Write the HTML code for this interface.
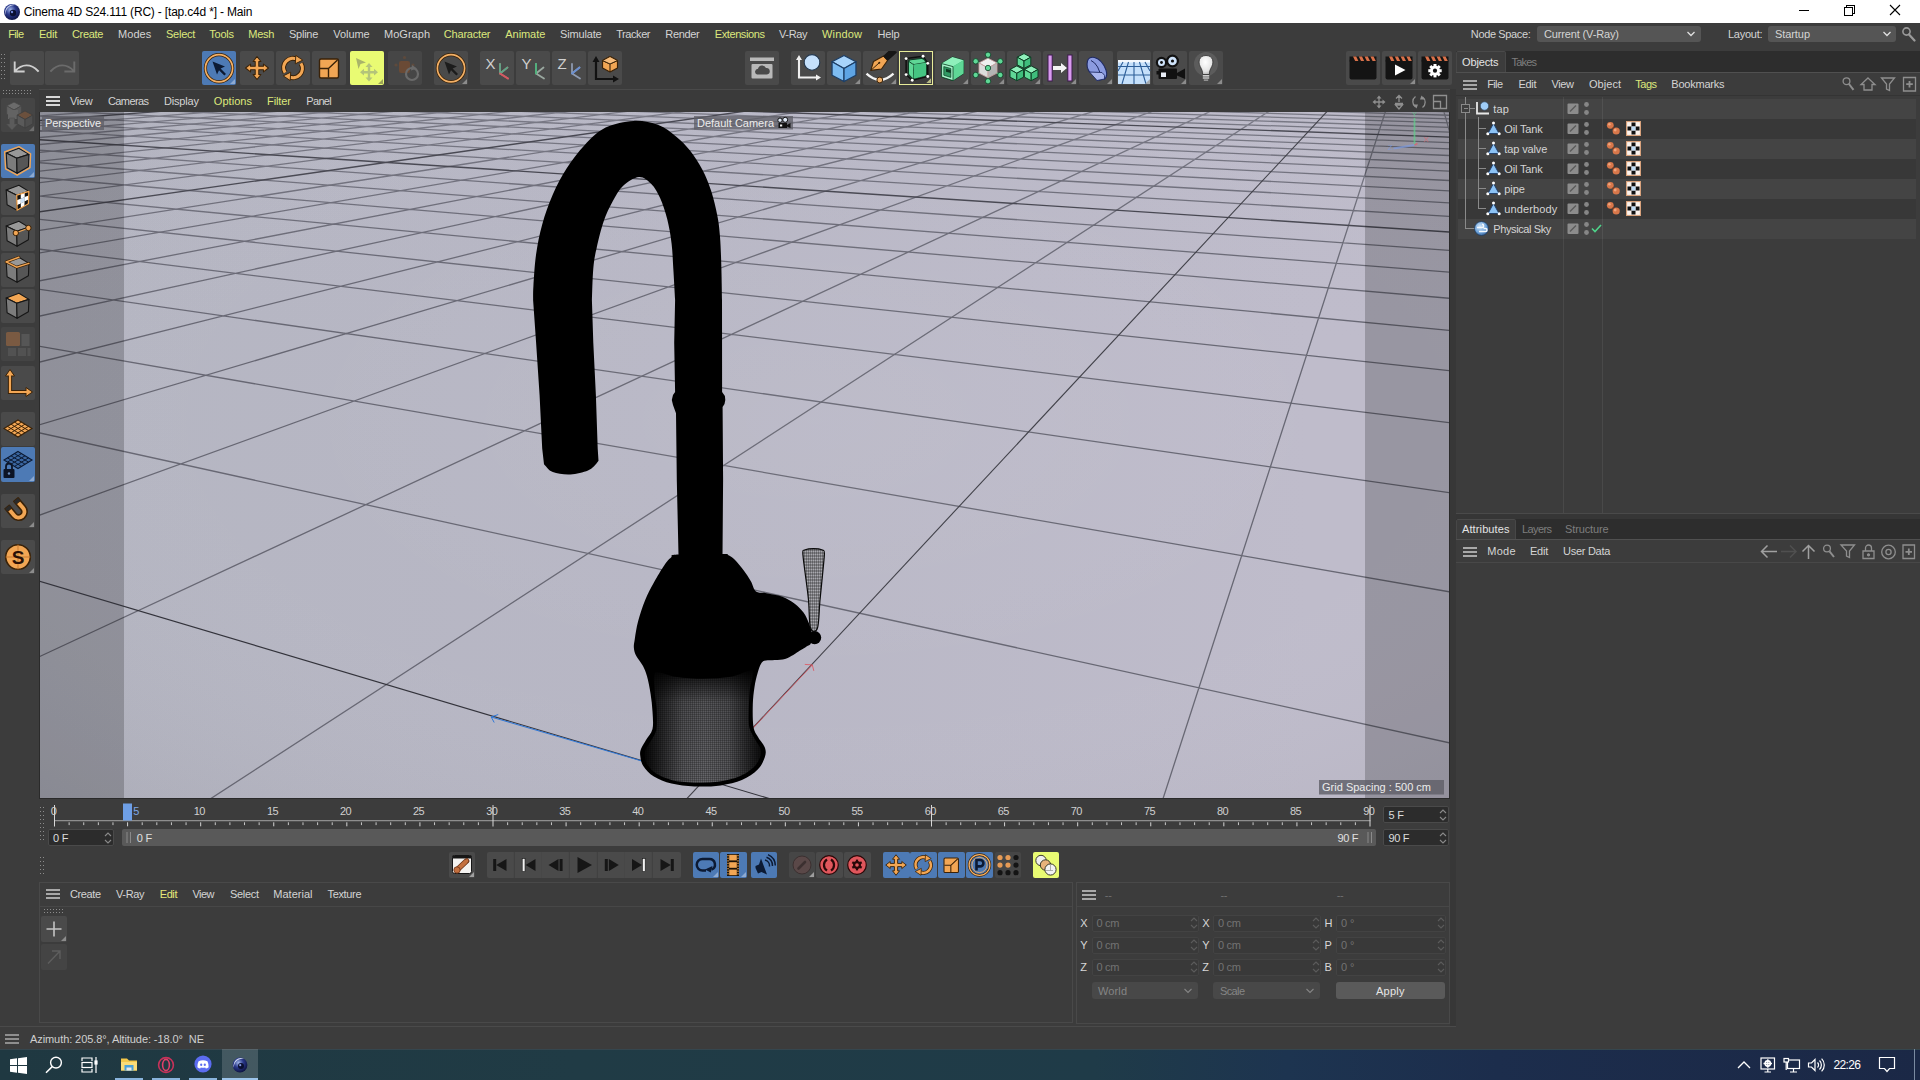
<!DOCTYPE html>
<html><head><meta charset="utf-8"><title>Cinema 4D</title>
<style>
html,body{margin:0;padding:0;}
body{width:1920px;height:1080px;overflow:hidden;background:#3c3c3c;position:relative;font-family:"Liberation Sans",sans-serif;}
div,span,svg{position:absolute;box-sizing:border-box;}
span{white-space:pre;}
svg text{font-family:"Liberation Sans",sans-serif;}
</style></head><body>
<div style="left:0px;top:0px;width:1920px;height:23px;background:#ffffff;"></div>
<svg style="left:3px;top:3px;" width="18" height="18"><defs><radialGradient id="c4dg" cx="0.4" cy="0.35" r="0.7"><stop offset="0" stop-color="#9fb4e8"/><stop offset="0.45" stop-color="#2b3a8c"/><stop offset="1" stop-color="#0a0f3a"/></radialGradient></defs>
<circle cx="9" cy="9" r="8" fill="url(#c4dg)"/><path d="M2.5 12 A8 8 0 0 1 13 2.2 A9 9 0 0 0 2.5 12Z" fill="#dfe6fa" opacity="0.85"/><circle cx="10" cy="10" r="3.2" fill="#0b1030"/><circle cx="9" cy="9" r="1.2" fill="#6f86d8"/></svg>
<span style="left:23.70px;top:3.64px;font-size:12px;line-height:16px;color:#000000;letter-spacing:-0.179px;">Cinema 4D S24.111 (RC) - [tap.c4d *] - Main</span>
<svg style="left:1795px;top:0px;" width="120" height="23"><g stroke="#000" stroke-width="1" fill="none" shape-rendering="crispEdges">
<path d="M4 10.5 H14"/>
<path d="M49.5 7.5 h8 v8 h-8 z"/><path d="M51.5 7.5 v-2 h8 v8 h-2"/>
</g><g stroke="#000" stroke-width="1.1" fill="none"><path d="M95 5 L105 15 M105 5 L95 15"/></g></svg>
<div style="left:0px;top:23px;width:1920px;height:23px;background:#3c3c3c;"></div>
<span style="left:8.30px;top:27.19px;font-size:11px;line-height:14px;color:#dde87c;letter-spacing:-0.675px;">File</span>
<span style="left:39.00px;top:27.19px;font-size:11px;line-height:14px;color:#dde87c;letter-spacing:-0.218px;">Edit</span>
<span style="left:72.00px;top:27.19px;font-size:11px;line-height:14px;color:#dde87c;letter-spacing:-0.343px;">Create</span>
<span style="left:118.00px;top:27.19px;font-size:11px;line-height:14px;color:#d4d4d4;letter-spacing:0.071px;">Modes</span>
<span style="left:166.00px;top:27.19px;font-size:11px;line-height:14px;color:#dde87c;letter-spacing:-0.254px;">Select</span>
<span style="left:209.30px;top:27.19px;font-size:11px;line-height:14px;color:#dde87c;letter-spacing:-0.245px;">Tools</span>
<span style="left:248.30px;top:27.19px;font-size:11px;line-height:14px;color:#dde87c;letter-spacing:-0.300px;">Mesh</span>
<span style="left:289.00px;top:27.19px;font-size:11px;line-height:14px;color:#d4d4d4;letter-spacing:-0.256px;">Spline</span>
<span style="left:333.30px;top:27.19px;font-size:11px;line-height:14px;color:#d4d4d4;letter-spacing:-0.058px;">Volume</span>
<span style="left:384.00px;top:27.19px;font-size:11px;line-height:14px;color:#d4d4d4;letter-spacing:0.024px;">MoGraph</span>
<span style="left:443.80px;top:27.19px;font-size:11px;line-height:14px;color:#dde87c;letter-spacing:-0.200px;">Character</span>
<span style="left:505.30px;top:27.19px;font-size:11px;line-height:14px;color:#dde87c;letter-spacing:-0.059px;">Animate</span>
<span style="left:560.00px;top:27.19px;font-size:11px;line-height:14px;color:#d4d4d4;letter-spacing:-0.157px;">Simulate</span>
<span style="left:616.20px;top:27.19px;font-size:11px;line-height:14px;color:#d4d4d4;letter-spacing:-0.429px;">Tracker</span>
<span style="left:665.30px;top:27.19px;font-size:11px;line-height:14px;color:#d4d4d4;letter-spacing:-0.336px;">Render</span>
<span style="left:714.70px;top:27.19px;font-size:11px;line-height:14px;color:#dde87c;letter-spacing:-0.390px;">Extensions</span>
<span style="left:779.00px;top:27.19px;font-size:11px;line-height:14px;color:#d4d4d4;letter-spacing:-0.364px;">V-Ray</span>
<span style="left:822.00px;top:27.19px;font-size:11px;line-height:14px;color:#dde87c;letter-spacing:0.175px;">Window</span>
<span style="left:877.50px;top:27.19px;font-size:11px;line-height:14px;color:#d4d4d4;letter-spacing:-0.208px;">Help</span>
<span style="left:1470.80px;top:27.19px;font-size:11px;line-height:14px;color:#d4d4d4;letter-spacing:-0.360px;">Node Space:</span>
<div style="left:1537px;top:26px;width:164px;height:16px;background:#555555;border-radius:3px;"></div>
<span style="left:1544.00px;top:27.19px;font-size:11px;line-height:14px;color:#d4d4d4;letter-spacing:-0.144px;">Current (V-Ray)</span>
<svg style="left:1686px;top:30px;" width="10" height="8"><path d="M1.5 2 L5 5.5 L8.5 2" stroke="#e0e0e0" stroke-width="1.3" fill="none"/></svg>
<span style="left:1728.00px;top:27.19px;font-size:11px;line-height:14px;color:#d4d4d4;letter-spacing:-0.264px;">Layout:</span>
<div style="left:1768px;top:26px;width:128px;height:16px;background:#555555;border-radius:3px;"></div>
<span style="left:1775.00px;top:27.19px;font-size:11px;line-height:14px;color:#d4d4d4;letter-spacing:-0.078px;">Startup</span>
<svg style="left:1882px;top:30px;" width="10" height="8"><path d="M1.5 2 L5 5.5 L8.5 2" stroke="#e0e0e0" stroke-width="1.3" fill="none"/></svg>
<svg style="left:1901px;top:26px;" width="16" height="16"><circle cx="5.5" cy="5.5" r="3.6" stroke="#9a9a9a" stroke-width="1.6" fill="none"/><path d="M8 8.5 L13.5 14.5" stroke="#9a9a9a" stroke-width="2.2" stroke-linecap="round"/></svg>
<svg style="left:1px;top:54px;" width="6" height="30"><rect x="0" y="0" width="1" height="1" fill="#8c8c8c"/><rect x="0" y="4" width="1" height="1" fill="#8c8c8c"/><rect x="0" y="8" width="1" height="1" fill="#8c8c8c"/><rect x="0" y="12" width="1" height="1" fill="#8c8c8c"/><rect x="0" y="16" width="1" height="1" fill="#8c8c8c"/><rect x="0" y="20" width="1" height="1" fill="#8c8c8c"/><rect x="0" y="24" width="1" height="1" fill="#8c8c8c"/><rect x="3" y="0" width="1" height="1" fill="#8c8c8c"/><rect x="3" y="4" width="1" height="1" fill="#8c8c8c"/><rect x="3" y="8" width="1" height="1" fill="#8c8c8c"/><rect x="3" y="12" width="1" height="1" fill="#8c8c8c"/><rect x="3" y="16" width="1" height="1" fill="#8c8c8c"/><rect x="3" y="20" width="1" height="1" fill="#8c8c8c"/><rect x="3" y="24" width="1" height="1" fill="#8c8c8c"/></svg>
<svg style="left:10px;top:51px;background:#4a4a4a;border-radius:2px;" width="34" height="34" viewBox="0 0 34 34"><path d="M4.7 11.5 V20.5 H13.7 M5 20.2 C12 12.5 21 12.5 28 20" stroke="#cfcfcf" stroke-width="1.9" fill="none" stroke-linecap="square"/></svg>
<svg style="left:44.5px;top:51px;background:#4a4a4a;border-radius:2px;" width="34" height="34" viewBox="0 0 34 34"><path d="M29.3 11.5 V20.5 H20.3 M29 20.2 C22 12.5 13 12.5 6 20" stroke="#6b6b6b" stroke-width="1.9" fill="none" stroke-linecap="square"/></svg>
<svg style="left:202px;top:51px;background:#4d7ab5;border-radius:2px;" width="34" height="34" viewBox="0 0 34 34"><circle cx="17" cy="17.3" r="13.6" fill="none" stroke="#3a2208" stroke-width="3.2"/><circle cx="17" cy="17.3" r="13.6" fill="none" stroke="#f3b066" stroke-width="1.7"/><path d="M10.5 10.5 L23 15.5 L18.6 17.5 L24 23 L22.3 24.6 L17 19.2 L15 23.6 Z" fill="#0c1a33"/><path d="M33 28 V33 H28 Z" fill="#9fb6d8" opacity="0.8"/></svg>
<svg style="left:240px;top:51px;background:#4a4a4a;border-radius:2px;" width="34" height="34" viewBox="0 0 34 34"><g transform="translate(17 17) scale(0.85) translate(-17 -17)"><g fill="#f2a654" stroke="#3a2208" stroke-width="1.2" stroke-linejoin="round"><path d="M17 3.5 L21.6 9.4 H19.1 V14.9 H24.6 V12.4 L30.5 17 L24.6 21.6 V19.1 H19.1 V24.6 H21.6 L17 30.5 L12.4 24.6 H14.9 V19.1 H9.4 V21.6 L3.5 17 L9.4 12.4 V14.9 H14.9 V9.4 H12.4 Z"/></g></g></svg>
<svg style="left:276px;top:51px;background:#4a4a4a;border-radius:2px;" width="34" height="34" viewBox="0 0 34 34"><g transform="translate(17 17) scale(0.93) translate(-17 -17)"><g fill="none" stroke="#3a2208" stroke-width="5.4"><path d="M8.5 22 A10 10 0 0 1 22 8"/><path d="M25.5 12 A10 10 0 0 1 12 26"/></g><g fill="none" stroke="#f2a654" stroke-width="3.4"><path d="M8.5 22 A10 10 0 0 1 22 8"/><path d="M25.5 12 A10 10 0 0 1 12 26"/></g><path d="M20 3.5 L27.5 8.5 L19.5 12.5 Z" fill="#f2a654" stroke="#3a2208" stroke-width="1"/><path d="M14 30.5 L6.5 25.5 L14.5 21.5 Z" fill="#f2a654" stroke="#3a2208" stroke-width="1"/></g></svg>
<svg style="left:312px;top:51px;background:#4a4a4a;border-radius:2px;" width="34" height="34" viewBox="0 0 34 34"><rect x="7.5" y="8" width="19" height="19" rx="1.5" fill="#f2a654" stroke="#3a2208" stroke-width="1.4"/><path d="M8 17.5 H16.5 V26.5 M16.5 17.5 L25.5 9" stroke="#3a2208" stroke-width="1.4" fill="none"/></svg>
<svg style="left:350px;top:51px;background:#e9fb73;border-radius:2px;" width="34" height="34" viewBox="0 0 34 34"><path d="M6 7 L16 11.5 L10.5 13 L8.5 18 Z" fill="#a9b46a"/><g fill="#b4c47a"><path d="M19 12 L22.5 16 H20.2 V20 H24 V17.8 L28 21.2 L24 24.6 V22.4 H20.2 V26.4 H22.5 L19 30.4 L15.5 26.4 H17.8 V22.4 H14 V24.6 L10 21.2 L14 17.8 V20 H17.8 V16 H15.5 Z"/></g><path d="M33 28 V33 H28 Z" fill="#8a9050" opacity="0.8"/></svg>
<svg style="left:388px;top:51px;background:#464646;border-radius:2px;" width="34" height="34" viewBox="0 0 34 34"><rect x="11" y="10" width="11" height="12" rx="2" fill="#6a4a35"/><circle cx="8" cy="14" r="1.6" fill="#5e4a3c"/><circle cx="25" cy="14" r="1.6" fill="#5e4a3c"/><circle cx="16.5" cy="6.5" r="1.6" fill="#5e4a3c"/><circle cx="24" cy="23" r="6" fill="none" stroke="#6a6a6a" stroke-width="2.2"/><path d="M24 14 L29 17.5 L23 19.5Z" fill="#6a6a6a"/></svg>
<svg style="left:434px;top:51px;background:#4a4a4a;border-radius:2px;" width="34" height="34" viewBox="0 0 34 34"><circle cx="17" cy="17.3" r="13.6" fill="none" stroke="#3a2208" stroke-width="3.2"/><circle cx="17" cy="17.3" r="13.6" fill="none" stroke="#f3b066" stroke-width="1.7"/><path d="M10.5 10.5 L23 15.5 L18.6 17.5 L24 23 L22.3 24.6 L17 19.2 L15 23.6 Z" fill="#1c1c1c"/><path d="M33 28 V33 H28 Z" fill="#9c9c9c" opacity="0.8"/></svg>
<svg style="left:480px;top:51px;background:#4a4a4a;border-radius:2px;" width="34" height="34" viewBox="0 0 34 34"><text x="5.5" y="18" font-size="15" fill="#d0d0d0">X</text><path d="M20 13 V22.5 L28 27.5 M20 22.5 L27.5 16.5" stroke="#d15a62" stroke-width="1.8" fill="none" stroke-linecap="round"/><path d="M20 13 V22.5 M20 22.5 L27.5 16.5" stroke="#5aa888" stroke-width="1.8" fill="none" stroke-linecap="round"/><path d="M20 22.5 L28 27.5" stroke="#d15a62" stroke-width="1.9" stroke-linecap="round"/></svg>
<svg style="left:516px;top:51px;background:#4a4a4a;border-radius:2px;" width="34" height="34" viewBox="0 0 34 34"><text x="5.5" y="18" font-size="15" fill="#d0d0d0">Y</text><path d="M20 13 V22.5 L28 27.5 M20 22.5 L27.5 16.5" stroke="#9aa8a0" stroke-width="1.8" fill="none" stroke-linecap="round"/><path d="M20 13 V22.5" stroke="#4fb27c" stroke-width="1.9" stroke-linecap="round"/></svg>
<svg style="left:552px;top:51px;background:#4a4a4a;border-radius:2px;" width="34" height="34" viewBox="0 0 34 34"><text x="5.5" y="18" font-size="15" fill="#d0d0d0">Z</text><path d="M20 13 V22.5 L28 27.5 M20 22.5 L27.5 16.5" stroke="#8e9ab0" stroke-width="1.8" fill="none" stroke-linecap="round"/><path d="M20 22.5 L27.5 16.5" stroke="#6a8fd0" stroke-width="1.9" stroke-linecap="round"/></svg>
<svg style="left:588px;top:51px;background:#4a4a4a;border-radius:2px;" width="34" height="34" viewBox="0 0 34 34"><path d="M8 9 V28 H27" stroke="#121212" stroke-width="2.2" fill="none"/><path d="M8 5 L11.5 11 H4.5Z M31 28 L25 24.5 V31.5Z" fill="#121212"/><path d="M22 5.5 L29.5 9.5 V17 L22 21 L14.5 17 V9.5Z" fill="#f2a654" stroke="#3a2208" stroke-width="1.2" stroke-linejoin="round"/><path d="M14.5 9.5 L22 13 L29.5 9.5 M22 13 V21" stroke="#3a2208" stroke-width="1.1" fill="none"/><path d="M22 5.5 L29.5 9.5 L22 13 L14.5 9.5Z" fill="#f7bd7c" stroke="#3a2208" stroke-width="1"/></svg>
<svg style="left:745px;top:51px;background:#4a4a4a;border-radius:2px;" width="34" height="34" viewBox="0 0 34 34"><rect x="5" y="6.5" width="24" height="3.5" fill="#b9b9b9"/><rect x="6.5" y="13" width="21" height="14.5" rx="1" fill="#b9b9b9"/><path d="M12 23.5 a3 3 0 0 1 1-5.8 a4.2 4.2 0 0 1 8-0.6 a3.2 3.2 0 0 1 1 6.4Z" fill="#4a4a4a"/></svg>
<svg style="left:791px;top:51px;background:#4a4a4a;border-radius:2px;" width="34" height="34" viewBox="0 0 34 34"><path d="M8 7.5 V26.5 H26.5" stroke="#f0f0f0" stroke-width="2.1" fill="none"/><path d="M8 4 L11 9 H5Z M30 26.5 L25 23.5 V29.5Z" fill="#f0f0f0"/><circle cx="21" cy="11.4" r="7.8" fill="#c4e0fc" stroke="#24384f" stroke-width="1.1"/></svg>
<svg style="left:827px;top:51px;background:#4a4a4a;border-radius:2px;" width="34" height="34" viewBox="0 0 34 34"><path d="M17 4.5 L28.96 10.74 L17 17.5 L5.039999999999999 10.74Z" fill="#a8d4fb" stroke="#1c3e66" stroke-width="1.3" stroke-linejoin="round"/><path d="M5.039999999999999 10.74 L17 17.5 V30.5 L5.039999999999999 24.259999999999998Z" fill="#7dbcf2" stroke="#1c3e66" stroke-width="1.3" stroke-linejoin="round"/><path d="M28.96 10.74 L17 17.5 V30.5 L28.96 24.259999999999998Z" fill="#5ea4e4" stroke="#1c3e66" stroke-width="1.3" stroke-linejoin="round"/><path d="M33 28 V33 H28 Z" fill="#9c9c9c" opacity="0.8"/></svg>
<svg style="left:863px;top:51px;background:#4a4a4a;border-radius:2px;" width="34" height="34" viewBox="0 0 34 34"><path d="M3.5 22.6 Q17 35 30.5 22.6" stroke="#f4f4f4" stroke-width="2.3" fill="none"/><circle cx="16.8" cy="29" r="2.9" fill="#f0b06a" stroke="#3a2208" stroke-width="1"/><path d="M7.8 19.4 L10.5 10.5 L20.5 5 L24.5 9.5 L18.5 18 Z" fill="#f2a654" stroke="#3a2208" stroke-width="1.1" stroke-linejoin="round"/><path d="M7.8 19.4 L16 12" stroke="#3a2208" stroke-width="1"/><circle cx="16.3" cy="11.7" r="1" fill="#3a2208"/><path d="M20 5.2 L25.5 0 H34 V1.5 L24.8 9.8Z" fill="#161616"/><path d="M33 28 V33 H28 Z" fill="#9c9c9c" opacity="0.8"/></svg>
<svg style="left:899px;top:51px;background:#3c3c3c;border-radius:2px;border:1px solid #e8ec9a;border-radius:0;" width="34" height="34" viewBox="0 0 34 34"><path d="M6.5 7 L24.5 4.5 L29.5 12 V26 L13 30 L6.5 24Z" fill="none" stroke="#101010" stroke-width="1.6"/><path d="M9 10.5 Q9 8.5 11.5 8.3 L22.5 6.8 Q25 6.6 26.4 8.7 L27.6 11.4 Q28 12.4 28 14 V23 Q28 25 26 25.6 L15.5 28.2 Q13.6 28.6 12.2 27.2 L9.8 24.6 Q9 23.6 9 22Z" fill="#5fd796" stroke="#0e3d24" stroke-width="1.1"/><path d="M9.4 10 Q14 13.5 15 13.3 L27.5 11.2 M15 13.3 Q14.2 20 14.4 28" stroke="#0e3d24" stroke-width="1" fill="none"/><path d="M15 13.3 L27.6 11.4 V23 Q28 25 26 25.6 L15.5 28.2 Q14.3 28.4 14.4 27Z" fill="#45c482"/><circle cx="6.5" cy="7" r="1.5" fill="#fff"/><circle cx="24.5" cy="4.5" r="1.5" fill="#fff"/><circle cx="29.5" cy="12" r="1.5" fill="#fff"/><circle cx="29.5" cy="26" r="1.5" fill="#fff"/><circle cx="13" cy="30" r="1.5" fill="#fff"/><circle cx="6.5" cy="24" r="1.5" fill="#fff"/><path d="M33 28 V33 H28 Z" fill="#d8dc9a" opacity="0.8"/></svg>
<svg style="left:935px;top:51px;background:#4a4a4a;border-radius:2px;" width="34" height="34" viewBox="0 0 34 34"><path d="M6.6 12.6 L17.4 6 L28.6 9.2 V22.6 L18 29.6 L6.6 26Z" fill="#3fae74" stroke="#0e3d24" stroke-width="1" stroke-linejoin="round"/><path d="M6.6 12.6 L17.4 6 L28.6 9.2 L18 15.6Z" fill="#8ff0bb"/><path d="M18 15.6 L28.6 9.2 V22.6 L18 29.6Z" fill="#5fd796"/><path d="M6.6 12.6 L18 15.6 V29.6 L6.6 26Z" fill="#a6f5cb" stroke="#0e3d24" stroke-width="0.8" stroke-linejoin="round"/><path d="M8.8 15.6 L15.8 17.5 V26.4 L8.8 24.2Z" fill="#2f9963" stroke="#0e3d24" stroke-width="0.7"/><path d="M11 17.8 L15.8 19.1 V22 L11 20.7Z" fill="#0f3a24"/><path d="M33 28 V33 H28 Z" fill="#9c9c9c" opacity="0.8"/></svg>
<svg style="left:971px;top:51px;background:#4a4a4a;border-radius:2px;" width="34" height="34" viewBox="0 0 34 34"><path d="M17 7.199999999999999 L26.016000000000002 11.904 L17 17 L7.983999999999998 11.904Z" fill="#efefef" stroke="#c8a0a0" stroke-width="0.8" stroke-linejoin="round"/><path d="M7.983999999999998 11.904 L17 17 V26.8 L7.983999999999998 22.096Z" fill="#dcdcdc" stroke="#c8a0a0" stroke-width="0.8" stroke-linejoin="round"/><path d="M26.016000000000002 11.904 L17 17 V26.8 L26.016000000000002 22.096Z" fill="#b4b4b4" stroke="#c8a0a0" stroke-width="0.8" stroke-linejoin="round"/><path d="M17 7.5 V3.5 M25.7 12 L29.5 10 M25.7 22 L29.5 24 M17 26.5 V30.5 M8.3 22 L4.5 24 M8.3 12 L4.5 10" stroke="#5fd796" stroke-width="1.2"/><circle cx="17" cy="3.8" r="2.7" fill="#5fd796" stroke="#0e3d24" stroke-width="0.8"/><circle cx="29.3" cy="10.3" r="2.7" fill="#5fd796" stroke="#0e3d24" stroke-width="0.8"/><circle cx="29.3" cy="24" r="2.7" fill="#5fd796" stroke="#0e3d24" stroke-width="0.8"/><circle cx="17" cy="30.2" r="2.7" fill="#5fd796" stroke="#0e3d24" stroke-width="0.8"/><circle cx="4.7" cy="24" r="2.7" fill="#5fd796" stroke="#0e3d24" stroke-width="0.8"/><circle cx="4.7" cy="10.3" r="2.7" fill="#5fd796" stroke="#0e3d24" stroke-width="0.8"/><circle cx="17" cy="17" r="2.7" fill="#5fd796" stroke="#0e3d24" stroke-width="0.8"/><path d="M33 28 V33 H28 Z" fill="#9c9c9c" opacity="0.8"/></svg>
<svg style="left:1007px;top:51px;background:#4a4a4a;border-radius:2px;" width="34" height="34" viewBox="0 0 34 34"><path d="M17 2.5999999999999996 L23.808 6.151999999999999 L17 10 L10.192 6.151999999999999Z" fill="#8ff0bb" stroke="#0e3d24" stroke-width="1" stroke-linejoin="round"/><path d="M10.192 6.151999999999999 L17 10 V17.4 L10.192 13.848Z" fill="#5fd796" stroke="#0e3d24" stroke-width="1" stroke-linejoin="round"/><path d="M23.808 6.151999999999999 L17 10 V17.4 L23.808 13.848Z" fill="#3fbd7c" stroke="#0e3d24" stroke-width="1" stroke-linejoin="round"/><path d="M9.8 14.9 L16.608 18.452 L9.8 22.3 L2.992 18.452Z" fill="#8ff0bb" stroke="#0e3d24" stroke-width="1" stroke-linejoin="round"/><path d="M2.992 18.452 L9.8 22.3 V29.700000000000003 L2.992 26.148Z" fill="#5fd796" stroke="#0e3d24" stroke-width="1" stroke-linejoin="round"/><path d="M16.608 18.452 L9.8 22.3 V29.700000000000003 L16.608 26.148Z" fill="#3fbd7c" stroke="#0e3d24" stroke-width="1" stroke-linejoin="round"/><path d="M24.2 14.9 L31.008 18.452 L24.2 22.3 L17.392 18.452Z" fill="#8ff0bb" stroke="#0e3d24" stroke-width="1" stroke-linejoin="round"/><path d="M17.392 18.452 L24.2 22.3 V29.700000000000003 L17.392 26.148Z" fill="#5fd796" stroke="#0e3d24" stroke-width="1" stroke-linejoin="round"/><path d="M31.008 18.452 L24.2 22.3 V29.700000000000003 L31.008 26.148Z" fill="#3fbd7c" stroke="#0e3d24" stroke-width="1" stroke-linejoin="round"/><path d="M33 28 V33 H28 Z" fill="#9c9c9c" opacity="0.8"/></svg>
<svg style="left:1043px;top:51px;background:#4a4a4a;border-radius:2px;" width="34" height="34" viewBox="0 0 34 34"><rect x="5" y="4" width="4.2" height="26" fill="#d99af0" stroke="#3a1a4a" stroke-width="1"/><rect x="24.8" y="4" width="4.2" height="26" fill="#d99af0" stroke="#3a1a4a" stroke-width="1"/><path d="M10 15 H18 V12 L24 17 L18 22 V19 H10Z" fill="#f4f4f4"/><path d="M33 28 V33 H28 Z" fill="#9c9c9c" opacity="0.8"/></svg>
<svg style="left:1079px;top:51px;background:#4a4a4a;border-radius:2px;" width="34" height="34" viewBox="0 0 34 34"><path d="M8.5 10 Q10 5.5 15.5 6.5 Q23 8.5 27 19 Q29 25.5 25.5 28 L18 29.5 Q15 23 10.5 21 Q7 16 8.5 10Z" fill="#8b9be0" stroke="#1f2a63" stroke-width="1.1"/><path d="M12 9.5 Q20 13 22.5 28.5" stroke="#1f2a63" stroke-width="1" fill="none"/><path d="M10.5 21 L18 29.5 L25.5 28 Q27 24 23 21.5Z" fill="#a9b5ec" stroke="#1f2a63" stroke-width="0.9"/><path d="M33 28 V33 H28 Z" fill="#9c9c9c" opacity="0.8"/></svg>
<svg style="left:1117px;top:51px;background:#4a4a4a;border-radius:2px;" width="34" height="34" viewBox="0 0 34 34"><rect x="1" y="9" width="32" height="24" fill="#c5e0fb"/><rect x="1" y="9" width="32" height="2.5" fill="#f4f8fd"/><path d="M1 15.5 H33 M1 24 H33 M17 11 V33 M11.5 11 L5 33 M22.5 11 L29 33 M6 11 L1 20 M28 11 L33 20" stroke="#2d5e98" stroke-width="1.1" fill="none"/><path d="M33 28 V33 H28 Z" fill="#9c9c9c" opacity="0.8"/></svg>
<svg style="left:1153px;top:51px;background:#4a4a4a;border-radius:2px;" width="34" height="34" viewBox="0 0 34 34"><circle cx="8.5" cy="11.5" r="4.6" fill="#cfe3fa" stroke="#111" stroke-width="2.2"/><circle cx="19.5" cy="10" r="5.4" fill="#cfe3fa" stroke="#111" stroke-width="2.2"/><circle cx="8.5" cy="11.5" r="1.4" fill="#111"/><circle cx="19.5" cy="10" r="1.6" fill="#111"/><rect x="5.5" y="17.5" width="18.5" height="10.5" rx="1" fill="#111"/><path d="M24 22 L32 17.5 V28 L24 24.5Z" fill="#111"/><rect x="8" y="21.5" width="5" height="4.5" fill="#e9eef6"/><rect x="3.5" y="20" width="2.5" height="3.5" fill="#111"/><path d="M33 28 V33 H28 Z" fill="#9c9c9c" opacity="0.8"/></svg>
<svg style="left:1189px;top:51px;background:#4a4a4a;border-radius:2px;" width="34" height="34" viewBox="0 0 34 34"><defs><radialGradient id="lg" cx="0.45" cy="0.35" r="0.7"><stop offset="0" stop-color="#ffffff"/><stop offset="0.7" stop-color="#e4e4e4"/><stop offset="1" stop-color="#a8a8a8"/></radialGradient></defs><circle cx="17" cy="13" r="12" fill="#ffffff" opacity="0.10"/><path d="M17 4.5 C10 4.5 8.8 11 11.2 15.5 C12.8 18.5 13.6 20 13.6 23.5 H20.4 C20.4 20 21.2 18.5 22.8 15.5 C25.2 11 24 4.5 17 4.5Z" fill="url(#lg)" stroke="#3a3a3a" stroke-width="0.9"/><rect x="13.8" y="24" width="6.4" height="1.6" fill="#cfcfcf"/><rect x="13.8" y="26.2" width="6.4" height="1.6" fill="#bdbdbd"/><rect x="14.8" y="28.4" width="4.4" height="1.5" fill="#9a9a9a"/><path d="M33 28 V33 H28 Z" fill="#9c9c9c" opacity="0.8"/></svg>
<svg style="left:1346px;top:51px;background:#4a4a4a;border-radius:2px;" width="34" height="34" viewBox="0 0 34 34"><rect x="3.5" y="8" width="27" height="20.5" rx="2" fill="#141414"/><path d="M3.5 5.5 H30.5 V10.5 H3.5Z" fill="#141414"/><path d="M7 5.5 h3.2 l2.2 4.6 h-3.2Z" fill="#d9714a"/><path d="M12.8 5.5 h3.2 l2.2 4.6 h-3.2Z" fill="#d9714a"/><path d="M18.6 5.5 h3.2 l2.2 4.6 h-3.2Z" fill="#d9714a"/><path d="M24.4 5.5 h3.2 l2.2 4.6 h-3.2Z" fill="#d9714a"/></svg>
<svg style="left:1382px;top:51px;background:#4a4a4a;border-radius:2px;" width="34" height="34" viewBox="0 0 34 34"><rect x="3.5" y="8" width="27" height="20.5" rx="2" fill="#141414"/><path d="M3.5 5.5 H30.5 V10.5 H3.5Z" fill="#141414"/><path d="M7 5.5 h3.2 l2.2 4.6 h-3.2Z" fill="#d9714a"/><path d="M12.8 5.5 h3.2 l2.2 4.6 h-3.2Z" fill="#d9714a"/><path d="M18.6 5.5 h3.2 l2.2 4.6 h-3.2Z" fill="#d9714a"/><path d="M24.4 5.5 h3.2 l2.2 4.6 h-3.2Z" fill="#d9714a"/><path d="M13 13.5 L23.5 19 L13 24.5Z" fill="#ffffff"/><path d="M33 28 V33 H28 Z" fill="#9c9c9c" opacity="0.8"/></svg>
<svg style="left:1418px;top:51px;background:#4a4a4a;border-radius:2px;" width="34" height="34" viewBox="0 0 34 34"><rect x="3.5" y="8" width="27" height="20.5" rx="2" fill="#141414"/><path d="M3.5 5.5 H30.5 V10.5 H3.5Z" fill="#141414"/><path d="M7 5.5 h3.2 l2.2 4.6 h-3.2Z" fill="#d9714a"/><path d="M12.8 5.5 h3.2 l2.2 4.6 h-3.2Z" fill="#d9714a"/><path d="M18.6 5.5 h3.2 l2.2 4.6 h-3.2Z" fill="#d9714a"/><path d="M24.4 5.5 h3.2 l2.2 4.6 h-3.2Z" fill="#d9714a"/><rect x="15.5" y="13" width="3" height="13.4" fill="#fff" transform="rotate(0 17 19.7)"/><rect x="15.5" y="13" width="3" height="13.4" fill="#fff" transform="rotate(45 17 19.7)"/><rect x="15.5" y="13" width="3" height="13.4" fill="#fff" transform="rotate(90 17 19.7)"/><rect x="15.5" y="13" width="3" height="13.4" fill="#fff" transform="rotate(135 17 19.7)"/><circle cx="17" cy="19.7" r="4.9" fill="#fff"/><circle cx="17" cy="19.7" r="2.1" fill="#141414"/></svg>
<svg style="left:3px;top:90px;" width="32" height="6"><rect x="0" y="0" width="1" height="1" fill="#8c8c8c"/><rect x="3" y="0" width="1" height="1" fill="#8c8c8c"/><rect x="6" y="0" width="1" height="1" fill="#8c8c8c"/><rect x="9" y="0" width="1" height="1" fill="#8c8c8c"/><rect x="12" y="0" width="1" height="1" fill="#8c8c8c"/><rect x="15" y="0" width="1" height="1" fill="#8c8c8c"/><rect x="18" y="0" width="1" height="1" fill="#8c8c8c"/><rect x="21" y="0" width="1" height="1" fill="#8c8c8c"/><rect x="24" y="0" width="1" height="1" fill="#8c8c8c"/><rect x="27" y="0" width="1" height="1" fill="#8c8c8c"/><rect x="0" y="3" width="1" height="1" fill="#8c8c8c"/><rect x="3" y="3" width="1" height="1" fill="#8c8c8c"/><rect x="6" y="3" width="1" height="1" fill="#8c8c8c"/><rect x="9" y="3" width="1" height="1" fill="#8c8c8c"/><rect x="12" y="3" width="1" height="1" fill="#8c8c8c"/><rect x="15" y="3" width="1" height="1" fill="#8c8c8c"/><rect x="18" y="3" width="1" height="1" fill="#8c8c8c"/><rect x="21" y="3" width="1" height="1" fill="#8c8c8c"/><rect x="24" y="3" width="1" height="1" fill="#8c8c8c"/><rect x="27" y="3" width="1" height="1" fill="#8c8c8c"/></svg>
<svg style="left:1px;top:98px;background:#454545;border-radius:2px;" width="34" height="34" viewBox="0 0 34 34"><g opacity="0.55"><path d="M13 4 L20.36 7.84 L13 12 L5.64 7.84Z" fill="#8a8a8a" stroke="#4a4a4a" stroke-width="0.8" stroke-linejoin="round"/><path d="M5.64 7.84 L13 12 V20 L5.64 16.16Z" fill="#7a7a7a" stroke="#4a4a4a" stroke-width="0.8" stroke-linejoin="round"/><path d="M20.36 7.84 L13 12 V20 L20.36 16.16Z" fill="#6a6a6a" stroke="#4a4a4a" stroke-width="0.8" stroke-linejoin="round"/><rect x="7" y="12" width="10" height="9" fill="#7c7c7c"/><path d="M8.5 20 h5 v6 h3 l-5.5 6 l-5.5-6 h3z" fill="#6e6e6e" stroke="#555" stroke-width="0.6"/><path d="M24 13.0 L31.82 17.08 L24 21.5 L16.18 17.08Z" fill="#8a5a38" stroke="#3a3a3a" stroke-width="0.8" stroke-linejoin="round"/><path d="M16.18 17.08 L24 21.5 V30.0 L16.18 25.92Z" fill="#6c6c6c" stroke="#3a3a3a" stroke-width="0.8" stroke-linejoin="round"/><path d="M31.82 17.08 L24 21.5 V30.0 L31.82 25.92Z" fill="#585858" stroke="#3a3a3a" stroke-width="0.8" stroke-linejoin="round"/></g><path d="M33 28 V33 H28 Z" fill="#777" opacity="0.8"/></svg>
<svg style="left:1px;top:144px;background:#4d7ab5;border-radius:2px;" width="34" height="34" viewBox="0 0 34 34"><path d="M5.2 8.9 L17.9 4.2 L27.9 10.4 L15.7 14.2Z" fill="#989898" stroke="#161616" stroke-width="1.1" stroke-linejoin="round"/><path d="M5.2 8.9 L15.7 14.2 L16.1 29.3 L6.1 23.8Z" fill="#7c7c7c" stroke="#161616" stroke-width="1.1" stroke-linejoin="round"/><path d="M15.7 14.2 L27.9 10.4 L27.4 22.7 L16.1 29.3Z" fill="#565656" stroke="#161616" stroke-width="1.1" stroke-linejoin="round"/><path d="M3.6 8 L18 2.6 L29.6 9.8 L29 23.6 L16.2 31.2 L4.6 24.8Z" fill="none" stroke="#f2a654" stroke-width="1.4" stroke-linejoin="round"/><path d="M33 28 V33 H28 Z" fill="#9fb6d8" opacity="0.8"/></svg>
<svg style="left:1px;top:181px;background:#4a4a4a;border-radius:2px;" width="34" height="34" viewBox="0 0 34 34"><path d="M5.2 8.9 L17.9 4.2 L27.9 10.4 L15.7 14.2Z" fill="#989898" stroke="#161616" stroke-width="1.1" stroke-linejoin="round"/><path d="M5.2 8.9 L15.7 14.2 L16.1 29.3 L6.1 23.8Z" fill="#7c7c7c" stroke="#161616" stroke-width="1.1" stroke-linejoin="round"/><path d="M15.7 14.2 L27.9 10.4 L27.4 22.7 L16.1 29.3Z" fill="#565656" stroke="#161616" stroke-width="1.1" stroke-linejoin="round"/><path d="M15.7 14.2 L19.8 12.9 L19.8 17.7 L15.8 19.2Z" fill="#111"/><path d="M19.8 12.9 L23.8 11.7 L23.8 16.1 L19.8 17.7Z" fill="#fff"/><path d="M23.8 11.7 L27.9 10.4 L27.7 14.5 L23.8 16.1Z" fill="#111"/><path d="M15.8 19.2 L19.8 17.7 L19.8 22.4 L16.0 24.3Z" fill="#fff"/><path d="M19.8 17.7 L23.8 16.1 L23.7 20.5 L19.8 22.4Z" fill="#cfe2f6"/><path d="M23.8 16.1 L27.7 14.5 L27.6 18.6 L23.7 20.5Z" fill="#fff"/><path d="M16.0 24.3 L19.8 22.4 L19.9 27.1 L16.1 29.3Z" fill="#111"/><path d="M19.8 22.4 L23.7 20.5 L23.6 24.9 L19.9 27.1Z" fill="#fff"/><path d="M23.7 20.5 L27.6 18.6 L27.4 22.7 L23.6 24.9Z" fill="#111"/><path d="M15.7 14.2 L27.9 10.4 L27.4 22.7 L16.1 29.3Z" fill="none" stroke="#f2a654" stroke-width="1.3" stroke-linejoin="round"/></svg>
<svg style="left:1px;top:217px;background:#4a4a4a;border-radius:2px;" width="34" height="34" viewBox="0 0 34 34"><path d="M5.2 8.9 L17.9 4.2 L27.9 10.4 L15.7 14.2Z" fill="#989898" stroke="#161616" stroke-width="1.1" stroke-linejoin="round"/><path d="M5.2 8.9 L15.7 14.2 L16.1 29.3 L6.1 23.8Z" fill="#7c7c7c" stroke="#161616" stroke-width="1.1" stroke-linejoin="round"/><path d="M15.7 14.2 L27.9 10.4 L27.4 22.7 L16.1 29.3Z" fill="#565656" stroke="#161616" stroke-width="1.1" stroke-linejoin="round"/><path d="M15.2 15.8 L27.2 11.2" stroke="#f2a654" stroke-width="1.2"/><circle cx="14.8" cy="16" r="2.7" fill="#f2a654" stroke="#3a2208" stroke-width="1"/><circle cx="27.4" cy="11" r="2.7" fill="#f2a654" stroke="#3a2208" stroke-width="1"/></svg>
<svg style="left:1px;top:253px;background:#4a4a4a;border-radius:2px;" width="34" height="34" viewBox="0 0 34 34"><path d="M5.2 8.9 L17.9 4.2 L27.9 10.4 L15.7 14.2Z" fill="#989898" stroke="#161616" stroke-width="1.1" stroke-linejoin="round"/><path d="M5.2 8.9 L15.7 14.2 L16.1 29.3 L6.1 23.8Z" fill="#7c7c7c" stroke="#161616" stroke-width="1.1" stroke-linejoin="round"/><path d="M15.7 14.2 L27.9 10.4 L27.4 22.7 L16.1 29.3Z" fill="#565656" stroke="#161616" stroke-width="1.1" stroke-linejoin="round"/><path d="M5.2 8.9 L17.9 4.2 M5.2 8.9 L15.7 14.2 L27.9 10.4" stroke="#3a2208" stroke-width="2.8" fill="none" stroke-linecap="round"/><path d="M5.2 8.9 L17.9 4.2 M5.2 8.9 L15.7 14.2 L27.9 10.4" stroke="#f2a654" stroke-width="1.5" fill="none" stroke-linecap="round"/></svg>
<svg style="left:1px;top:289px;background:#4a4a4a;border-radius:2px;" width="34" height="34" viewBox="0 0 34 34"><path d="M5.2 8.9 L17.9 4.2 L27.9 10.4 L15.7 14.2Z" fill="#f2a654" stroke="#161616" stroke-width="1.1" stroke-linejoin="round"/><path d="M5.2 8.9 L15.7 14.2 L16.1 29.3 L6.1 23.8Z" fill="#7c7c7c" stroke="#161616" stroke-width="1.1" stroke-linejoin="round"/><path d="M15.7 14.2 L27.9 10.4 L27.4 22.7 L16.1 29.3Z" fill="#565656" stroke="#161616" stroke-width="1.1" stroke-linejoin="round"/></svg>
<svg style="left:1px;top:327px;background:#444444;border-radius:2px;" width="34" height="34" viewBox="0 0 34 34"><rect x="5" y="5" width="14" height="14" rx="1.5" fill="#7a5a42"/><rect x="20.5" y="7" width="8" height="12" fill="#565656"/><rect x="7" y="21" width="8" height="8" fill="#525252"/><rect x="17" y="21" width="8" height="8" fill="#525252"/><rect x="26.5" y="21" width="3" height="8" fill="#525252"/></svg>
<svg style="left:1px;top:366px;background:#4a4a4a;border-radius:2px;" width="34" height="34" viewBox="0 0 34 34"><path d="M9 8 V26 H27" stroke="#3a2208" stroke-width="4.2" fill="none"/><path d="M9 3.5 L13.5 10 H4.5Z M31.5 26 L25 21.5 V30.5Z" fill="#f2a654" stroke="#3a2208" stroke-width="1"/><path d="M9 8 V26 H27" stroke="#f2a654" stroke-width="2.2" fill="none"/></svg>
<svg style="left:1px;top:412px;background:#4a4a4a;border-radius:2px;" width="34" height="34" viewBox="0 0 34 34"><path d="M17 8.0 L31 16.5 L17 25.0 L3 16.5Z" fill="#f2a654" stroke="#3a2208" stroke-width="1.1"/><path d="M13.5 10.1 L27.5 18.6 M20.5 10.1 L6.5 18.6" stroke="#3a2208" stroke-width="1"/><path d="M10.0 12.2 L24.0 20.8 M24.0 12.2 L10.0 20.8" stroke="#3a2208" stroke-width="1"/><path d="M6.5 14.4 L20.5 22.9 M27.5 14.4 L13.5 22.9" stroke="#3a2208" stroke-width="1"/></svg>
<svg style="left:1px;top:447px;background:#4d7ab5;border-radius:2px;" width="34" height="35" viewBox="0 0 34 35"><path d="M17 4.5 L31 13 L17 21.5 L3 13Z" fill="#3a66a0" stroke="#0c1a33" stroke-width="1.1"/><path d="M13.5 6.6 L27.5 15.1 M20.5 6.6 L6.5 15.1" stroke="#0c1a33" stroke-width="1"/><path d="M10.0 8.8 L24.0 17.2 M24.0 8.8 L10.0 17.2" stroke="#0c1a33" stroke-width="1"/><path d="M6.5 10.9 L20.5 19.4 M27.5 10.9 L13.5 19.4" stroke="#0c1a33" stroke-width="1"/><rect x="2.5" y="22" width="11" height="9" rx="1" fill="#0c1426"/><path d="M5 22 V19.5 A3 3 0 0 1 11 19.5 V22" stroke="#0c1426" stroke-width="1.8" fill="none"/><circle cx="8" cy="26.5" r="1.2" fill="#6a8ab8"/><path d="M33 29 V34 H28 Z" fill="#9fb6d8" opacity="0.8"/></svg>
<svg style="left:1px;top:494px;background:#4a4a4a;border-radius:2px;" width="34" height="34" viewBox="0 0 34 34"><g transform="rotate(-40 17 17)"><path d="M8.5 7 V18 A8.5 8.5 0 0 0 25.5 18 V7 H20 V18 A3 3 0 0 1 14 18 V7Z" fill="#f2a654" stroke="#3a2208" stroke-width="1.6" stroke-linejoin="round"/><path d="M8.5 10.5 H14 M20 10.5 H25.5" stroke="#3a2208" stroke-width="1.2"/><rect x="8.5" y="7" width="5.5" height="3.5" fill="#2a2a2a"/><rect x="20" y="7" width="5.5" height="3.5" fill="#2a2a2a"/></g><path d="M33 28 V33 H28 Z" fill="#9c9c9c" opacity="0.8"/></svg>
<svg style="left:1px;top:540px;background:#4a4a4a;border-radius:2px;" width="34" height="34" viewBox="0 0 34 34"><circle cx="17" cy="17" r="12.3" fill="#f2a654" stroke="#3a2208" stroke-width="1.6"/><path d="M17 4.7 V29.3 M4.7 17 H29.3" stroke="#c97a30" stroke-width="1"/><text x="17" y="23.6" font-size="19" font-weight="bold" fill="#2a1006" text-anchor="middle">S</text><path d="M33 28 V33 H28 Z" fill="#9c9c9c" opacity="0.8"/></svg>
<div style="left:39px;top:89px;width:1411px;height:23px;background:#3a3a3a;border-top:1px solid #4a4a4a;"></div>
<svg style="left:46px;top:96px;" width="14" height="10"><rect x="0" y="0" width="14" height="2" fill="#d8d8d8"/><rect x="0" y="4" width="14" height="2" fill="#d8d8d8"/><rect x="0" y="8" width="14" height="2" fill="#d8d8d8"/></svg>
<span style="left:70.00px;top:93.99px;font-size:11px;line-height:14px;color:#d4d4d4;letter-spacing:-0.281px;">View</span>
<span style="left:108.00px;top:93.99px;font-size:11px;line-height:14px;color:#d4d4d4;letter-spacing:-0.604px;">Cameras</span>
<span style="left:164.00px;top:93.99px;font-size:11px;line-height:14px;color:#d4d4d4;letter-spacing:-0.178px;">Display</span>
<span style="left:213.80px;top:93.99px;font-size:11px;line-height:14px;color:#dde87c;letter-spacing:0.048px;">Options</span>
<span style="left:267.00px;top:93.99px;font-size:11px;line-height:14px;color:#dde87c;letter-spacing:-0.089px;">Filter</span>
<span style="left:306.30px;top:93.99px;font-size:11px;line-height:14px;color:#d4d4d4;letter-spacing:-0.684px;">Panel</span>
<svg style="left:1371px;top:94px;" width="80" height="16"><g fill="none" stroke="#8f8f8f" stroke-width="1.3">
<path d="M8 1.5 L10.5 4.5 H5.5Z M8 14.5 L10.5 11.5 H5.5Z M1.5 8 L4.5 5.5 V10.5Z M14.5 8 L11.5 5.5 V10.5Z" fill="#8f8f8f" stroke="none"/><path d="M8 4 V12 M4 8 H12"/>
<path d="M28 1.5 V8 M25 4.5 L28 1.5 L31 4.5 M24 9.5 H32 M28 15 L24.5 11 H31.5Z"/>
<path d="M44.5 2.5 A6.5 6.5 0 0 0 44.5 13 M51.5 13.5 A6.5 6.5 0 0 0 51.5 3"/><path d="M42 10.5 L45.5 14.5 L47 10.5Z M54 5.5 L50.5 1.5 L49 5.5Z" fill="#8f8f8f" stroke="none"/>
<path d="M62.5 1.5 H75.5 V14.5 H62.5Z M62.5 7.5 H69.5 V14.5"/></g></svg>
<svg style="left:40px;top:112px;" width="1409" height="686" viewBox="0 0 1409 686"><defs><linearGradient id="vbg" x1="0" y1="0" x2="1" y2="0"><stop offset="0" stop-color="#b5b6c2"/><stop offset="0.45" stop-color="#b8b7c5"/><stop offset="0.9" stop-color="#bfbccb"/><stop offset="1" stop-color="#bfbccb"/></linearGradient><clipPath id="vclip"><rect x="0" y="0" width="1409" height="686"/></clipPath></defs><rect x="0" y="0" width="1409" height="686" fill="url(#vbg)"/><g clip-path="url(#vclip)" fill="none"><path d="M-2.0 320.6L1411.0 631.2 M-2.0 234.0L1411.0 480.1 M-2.0 177.1L1411.0 380.9 M-2.0 137.0L1411.0 310.9 M-2.0 107.1L1411.0 258.8 M-2.0 84.0L1411.0 218.5 M-2.0 65.6L1411.0 186.4 M-2.0 50.6L1411.0 160.2 M-2.0 38.1L1411.0 138.5 M-2.0 18.6L1411.0 104.5 M-2.0 10.8L1411.0 90.9 M-2.0 4.0L1411.0 79.0 M-2.0 -1.9L1411.0 68.6 M109.3 -2.0L1411.0 59.3 M222.1 -2.0L1411.0 51.1 M334.7 -2.0L1411.0 43.6 M447.4 -2.0L1411.0 36.9 M560.1 -2.0L1411.0 30.8 M785.4 -2.0L1411.0 20.1 M898.0 -2.0L1411.0 15.4 M1010.6 -2.0L1411.0 11.0 M1123.2 -2.0L1411.0 7.0 M1235.8 -2.0L1411.0 3.3 M1348.3 -2.0L1411.0 -0.2 M1403.4 -2.0L1411.0 24.7 M1122.6 688.0L1345.9 -2.0 M168.6 688.0L1230.9 -2.0 M-2.0 545.3L1173.4 -2.0 M-2.0 403.7L1116.0 -2.0 M-2.0 313.2L1058.5 -2.0 M-2.0 250.5L1000.9 -2.0 M-2.0 204.4L943.4 -2.0 M-2.0 169.1L885.9 -2.0 M-2.0 141.2L828.4 -2.0 M-2.0 118.7L770.9 -2.0 M-2.0 84.3L655.8 -2.0 M-2.0 70.9L598.3 -2.0 M-2.0 59.4L540.8 -2.0 M-2.0 49.4L483.2 -2.0 M-2.0 40.5L425.7 -2.0 M-2.0 32.7L368.2 -2.0 M-2.0 25.7L310.6 -2.0 M-2.0 19.5L253.1 -2.0 M-2.0 13.8L195.5 -2.0 M-2.0 4.0L80.4 -2.0 M-2.0 -0.3L22.9 -2.0" stroke="#676773" stroke-width="1.3"/></g><defs><linearGradient id="farfade" x1="0" y1="0" x2="0" y2="1"><stop offset="0" stop-color="#bbbcca" stop-opacity="0.2"/><stop offset="0.5" stop-color="#bab9c7" stop-opacity="0.07"/><stop offset="1" stop-color="#b9b8c6" stop-opacity="0"/></linearGradient></defs><rect x="0" y="0" width="1409" height="230" fill="url(#farfade)"/><g clip-path="url(#vclip)" fill="none"><path d="M-2.0 27.6L1411.0 120.1 M672.7 -2.0L1411.0 25.2 M-2.0 100.0L713.4 -2.0 M-2.0 8.7L138.0 -2.0" stroke="#484852" stroke-width="1.35"/></g><defs><radialGradient id="vig" cx="0.55" cy="0.45" r="0.8"><stop offset="0" stop-color="#fff" stop-opacity="0.05"/><stop offset="0.5" stop-color="#fff" stop-opacity="0"/><stop offset="1" stop-color="#000" stop-opacity="0.06"/></radialGradient></defs><rect x="0" y="0" width="1409" height="686" fill="url(#vig)"/><rect x="0" y="0" width="84" height="686" fill="#000" opacity="0.2"/><rect x="1325" y="0" width="84" height="686" fill="#000" opacity="0.2"/><g clip-path="url(#vclip)"><path d="M-2.0 468.8L734.1 688.0" stroke="#33333b" stroke-width="1.15" fill="none"/><path d="M645.6 688.0L1288.4 -2.0" stroke="#404048" stroke-width="1.1" fill="none"/><path d="M664.8 667.4L451.2 605.0" stroke="#2f78d8" stroke-width="1.0" fill="none"/><path d="M664.8 667.4L772.3 552.9" stroke="#e0505a" stroke-width="0.8" fill="none"/><path d="M458.2 602.5 L451.2 605.0 L454.2 610.5" stroke="#2f78d8" stroke-width="1" fill="none"/><path d="M764.8 552.4 L772.3 552.9 L773.8 558.9" stroke="#e0505a" stroke-width="0.8" fill="none"/><path d="M493.1 188.0C493.2 185.7 492.9 181.6 493.4 174.0C493.9 166.4 494.6 152.6 496.1 142.3C497.6 132.0 499.4 122.4 502.2 112.4C505.0 102.4 508.7 91.9 512.8 82.5C516.9 73.1 521.6 64.3 526.9 56.1C532.2 47.9 538.0 39.9 544.5 33.2C551.0 26.4 557.4 19.6 565.6 15.6C573.8 11.5 584.9 9.3 593.7 8.9C602.5 8.5 611.4 10.4 618.4 13.0C625.4 15.6 630.7 20.2 636.0 24.4C641.3 28.7 645.6 32.9 650.0 38.5C654.4 44.1 658.9 51.1 662.4 57.8C665.9 64.6 668.7 71.4 671.2 79.0C673.7 86.6 675.8 96.0 677.3 103.6C678.8 111.2 679.3 115.9 680.0 124.7C680.7 133.5 681.1 145.8 681.4 156.4C681.7 166.9 681.9 182.7 682.0 188.0 L682.1 280.0 L684.9 284.0 L685.3 288.0 L684.5 292.0 L682.6 295.0 L683.1 368.0 L682.5 443.0 L638.5 443.0 L636.8 368.0 L636.0 301.2 L633.0 293.0 L631.8 288.0 L633.0 283.0 L635.1 280.0 L634.2 230.8 L635.1 188.0C634.8 182.7 633.9 165.8 633.3 156.4C632.7 147.0 632.6 139.9 631.6 131.7C630.6 123.5 629.1 114.7 627.2 107.1C625.3 99.5 622.8 91.9 620.1 86.0C617.5 80.1 614.8 75.4 611.3 71.9C607.8 68.4 603.7 64.6 599.0 64.9C594.3 65.2 587.6 69.6 583.2 73.7C578.8 77.8 575.8 83.6 572.6 89.5C569.4 95.4 566.4 101.3 563.8 108.9C561.2 116.5 558.5 127.4 556.8 135.3C555.0 143.2 554.1 147.6 553.3 156.4C552.5 165.2 552.1 182.7 551.9 188.0 L551.9 188.0 L553.3 230.8 L555.9 283.6 L557.7 336.4 L558.5 348.7C556.1 352.5 552.5 356.5 548.0 358.4C543.5 360.2 536.3 362.1 530.4 362.4C524.5 362.7 517.2 361.8 512.8 360.1C508.4 358.4 505.5 353.5 504.0 352.2 L504.0 352.2 L502.2 336.4 L499.6 283.6 L496.1 230.8 L493.1 188.0Z" fill="#000"/><path d="M637.0 442.5C628.3 443.1 633.1 443.8 631.0 445.5C628.9 447.2 627.4 448.8 624.5 453.0C621.6 457.2 617.1 464.7 613.9 470.6C610.7 476.5 607.7 481.8 605.1 488.2C602.5 494.7 599.8 502.8 598.1 509.3C596.4 515.8 595.5 522.4 594.8 526.9C594.1 531.4 593.6 533.1 593.9 536.0C594.1 538.9 594.8 541.0 596.3 544.0C597.8 547.0 601.2 550.6 603.0 554.0C604.8 557.4 605.7 559.6 607.0 564.3C608.3 568.9 609.7 576.0 610.6 581.9C611.5 587.8 612.2 593.6 612.5 599.5C612.8 605.4 613.6 612.2 612.5 617.0C611.4 621.8 607.9 624.7 606.0 628.0C604.1 631.3 602.0 634.3 601.0 637.0C600.0 639.7 599.9 641.2 600.3 644.0C600.7 646.8 601.0 650.6 603.3 654.0C605.6 657.4 609.2 661.7 613.9 664.6C618.6 667.5 624.8 670.0 631.5 671.6C638.2 673.2 646.2 674.2 654.4 674.5C662.6 674.8 672.9 674.5 680.8 673.4C688.7 672.3 695.8 670.7 701.9 668.1C708.0 665.5 713.9 661.4 717.7 657.6C721.5 653.8 723.6 648.8 724.8 645.2C726.0 641.6 726.1 639.4 725.0 636.0C723.9 632.6 719.9 628.5 718.0 625.0C716.1 621.5 714.4 620.4 713.5 615.0C712.6 609.6 712.6 599.2 712.8 592.5C713.0 585.8 713.7 580.2 714.5 574.9C715.3 569.6 716.6 564.7 717.7 560.8C718.8 556.9 719.8 553.5 721.2 551.5C722.6 549.5 722.0 549.2 726.0 548.5C730.0 547.8 739.3 548.7 745.0 547.0C750.7 545.3 756.4 540.6 760.0 538.5C763.6 536.4 764.7 535.8 766.5 534.5C768.3 533.2 770.2 533.4 771.0 531.0C771.8 528.6 771.9 523.3 771.5 520.0C771.1 516.7 770.1 514.4 768.8 511.1C767.5 507.9 765.9 503.7 763.5 500.5C761.1 497.3 758.2 494.3 754.7 491.7C751.2 489.1 747.1 486.5 742.4 484.7C737.7 483.0 730.9 482.1 726.5 481.2C722.1 480.3 718.6 481.4 716.0 479.4C713.4 477.3 712.8 472.4 710.7 468.9C708.6 465.4 706.2 461.8 703.6 458.3C701.0 454.8 697.4 450.3 694.8 447.7C692.2 445.2 690.0 443.9 688.0 443.0C686.0 442.1 691.5 442.1 683.0 442.0C674.5 441.9 645.7 441.9 637.0 442.5Z" fill="#000"/><circle cx="774.6" cy="525.6" r="6.6" fill="#000"/><defs><pattern id="mesh" width="2" height="2" patternUnits="userSpaceOnUse"><rect width="2" height="2" fill="#000"/><rect x="0.45" y="0.45" width="1.25" height="1.25" fill="#d6d6de"/></pattern><pattern id="mesh2" width="2" height="3" patternUnits="userSpaceOnUse"><rect width="2" height="3" fill="#0a0a0a"/><rect x="0.45" y="0.25" width="1.3" height="2.5" fill="#dedee6"/></pattern><linearGradient id="meshfade" x1="0" y1="556" x2="0" y2="678" gradientUnits="userSpaceOnUse"><stop offset="0" stop-color="#fff" stop-opacity="0"/><stop offset="0.10" stop-color="#fff" stop-opacity="0.35"/><stop offset="0.28" stop-color="#fff" stop-opacity="0.85"/><stop offset="1" stop-color="#fff" stop-opacity="1"/></linearGradient><mask id="mfade" maskUnits="userSpaceOnUse" x="590" y="540" width="220" height="160"><rect x="590" y="540" width="220" height="160" fill="url(#meshfade)"/></mask></defs><g mask="url(#mfade)"><path d="M615.0 560.0C618.5 557.3 627.0 563.0 635.0 564.0C643.0 565.0 653.7 566.0 663.0 566.0C672.3 566.0 682.7 565.3 691.0 564.0C699.3 562.7 709.8 555.7 713.0 558.0C716.2 560.3 711.1 571.0 710.5 578.0C709.9 585.0 709.6 593.8 709.5 600.0C709.4 606.2 709.1 610.7 710.0 615.0C710.9 619.3 713.2 622.5 715.0 626.0C716.8 629.5 720.0 632.8 721.0 636.0C722.0 639.2 722.2 641.7 721.0 645.0C719.8 648.3 717.7 652.6 714.0 656.0C710.3 659.4 705.0 663.1 699.0 665.5C693.0 667.9 685.5 669.5 678.0 670.5C670.5 671.5 661.7 671.8 654.0 671.5C646.3 671.2 638.3 670.5 632.0 669.0C625.7 667.5 620.2 665.2 616.0 662.5C611.8 659.8 608.5 656.1 606.5 653.0C604.5 649.9 604.2 646.7 604.0 644.0C603.8 641.3 604.0 639.5 605.0 637.0C606.0 634.5 608.2 632.2 610.0 629.0C611.8 625.8 614.5 623.0 615.5 618.0C616.5 613.0 616.2 605.3 616.0 599.0C615.8 592.7 614.2 586.5 614.0 580.0C613.8 573.5 611.5 562.7 615.0 560.0Z" fill="url(#mesh)" stroke="#000" stroke-width="1.5"/></g><defs><linearGradient id="meshside" x1="604" y1="0" x2="725" y2="0" gradientUnits="userSpaceOnUse"><stop offset="0" stop-color="#000" stop-opacity="0.95"/><stop offset="0.16" stop-color="#000" stop-opacity="0.55"/><stop offset="0.32" stop-color="#000" stop-opacity="0.12"/><stop offset="0.5" stop-color="#000" stop-opacity="0"/><stop offset="0.7" stop-color="#000" stop-opacity="0.12"/><stop offset="0.85" stop-color="#000" stop-opacity="0.55"/><stop offset="1" stop-color="#000" stop-opacity="0.95"/></linearGradient></defs><path d="M615.0 560.0C618.5 557.3 627.0 563.0 635.0 564.0C643.0 565.0 653.7 566.0 663.0 566.0C672.3 566.0 682.7 565.3 691.0 564.0C699.3 562.7 709.8 555.7 713.0 558.0C716.2 560.3 711.1 571.0 710.5 578.0C709.9 585.0 709.6 593.8 709.5 600.0C709.4 606.2 709.1 610.7 710.0 615.0C710.9 619.3 713.2 622.5 715.0 626.0C716.8 629.5 720.0 632.8 721.0 636.0C722.0 639.2 722.2 641.7 721.0 645.0C719.8 648.3 717.7 652.6 714.0 656.0C710.3 659.4 705.0 663.1 699.0 665.5C693.0 667.9 685.5 669.5 678.0 670.5C670.5 671.5 661.7 671.8 654.0 671.5C646.3 671.2 638.3 670.5 632.0 669.0C625.7 667.5 620.2 665.2 616.0 662.5C611.8 659.8 608.5 656.1 606.5 653.0C604.5 649.9 604.2 646.7 604.0 644.0C603.8 641.3 604.0 639.5 605.0 637.0C606.0 634.5 608.2 632.2 610.0 629.0C611.8 625.8 614.5 623.0 615.5 618.0C616.5 613.0 616.2 605.3 616.0 599.0C615.8 592.7 614.2 586.5 614.0 580.0C613.8 573.5 611.5 562.7 615.0 560.0Z" fill="url(#meshside)"/><path d="M762.8 441.0C762.7 437.3 762.7 438.7 764.5 438.0C766.3 437.3 770.5 436.6 773.5 436.6C776.5 436.6 780.7 437.2 782.5 438.0C784.3 438.8 784.4 437.8 784.4 441.5C784.4 445.2 783.5 452.2 782.8 460.0C782.1 467.8 780.9 478.7 780.0 488.0C779.1 497.3 779.1 511.3 777.5 516.0C775.9 520.7 772.0 520.7 770.5 516.0C769.0 511.3 769.4 497.3 768.5 488.0C767.6 478.7 766.0 467.8 765.0 460.0C764.0 452.2 762.9 444.7 762.8 441.0Z" fill="url(#mesh2)" stroke="#0a0a0a" stroke-width="1.2"/></g><rect x="2" y="4" width="62" height="14" fill="#5e5e66" opacity="0.75"/><text x="5" y="15" font-size="11" fill="#ececec" textLength="56" lengthAdjust="spacing">Perspective</text><rect x="654" y="4" width="99" height="13.5" fill="#5e5e66" opacity="0.75"/><text x="657" y="14.8" font-size="11" fill="#ececec" textLength="77" lengthAdjust="spacing">Default Camera</text><g transform="translate(737,5)"><circle cx="3" cy="3.2" r="2.2" fill="#dfe9f6" stroke="#111" stroke-width="1"/><circle cx="8.2" cy="2.8" r="2.5" fill="#dfe9f6" stroke="#111" stroke-width="1"/><rect x="1.5" y="6" width="8.5" height="5" fill="#111"/><path d="M10 8 L13.5 6 V11 L10 9.5Z" fill="#111"/><rect x="3" y="7.5" width="2.2" height="2" fill="#eee"/></g><rect x="1279" y="668" width="125" height="14.5" fill="#5e5e66" opacity="0.8"/><text x="1282" y="679.3" font-size="11" fill="#ececec" textLength="109" lengthAdjust="spacing">Grid Spacing : 500 cm</text><g transform="translate(1374.5,33)" opacity="0.7"><path d="M0 0 V-27" stroke="#5fd08a" stroke-width="1.8"/><path d="M0 0 L-21 3.5" stroke="#7d9be0" stroke-width="1.8"/><path d="M0 0 L3 -1.5" stroke="#e0606a" stroke-width="1.8"/><text x="-27" y="5" font-size="8" fill="#7d9be0">Z</text><text x="9" y="-3" font-size="8" fill="#e0606a">X</text><text x="-2.5" y="-28" font-size="7" fill="#5fd08a">Y</text></g></svg>
<div style="left:39px;top:112px;width:1px;height:687px;background:#2a2a2a;"></div>
<div style="left:1449px;top:112px;width:1px;height:687px;background:#2a2a2a;"></div>
<div style="left:39px;top:798px;width:1411px;height:1px;background:#2a2a2a;"></div>
<div style="left:1450px;top:89px;width:6px;height:937px;background:#373737;"></div>
<svg style="left:40px;top:807px;" width="6" height="36"><rect x="0" y="0" width="1" height="1" fill="#8c8c8c"/><rect x="0" y="4" width="1" height="1" fill="#8c8c8c"/><rect x="0" y="8" width="1" height="1" fill="#8c8c8c"/><rect x="0" y="12" width="1" height="1" fill="#8c8c8c"/><rect x="0" y="16" width="1" height="1" fill="#8c8c8c"/><rect x="0" y="20" width="1" height="1" fill="#8c8c8c"/><rect x="0" y="24" width="1" height="1" fill="#8c8c8c"/><rect x="0" y="28" width="1" height="1" fill="#8c8c8c"/><rect x="0" y="32" width="1" height="1" fill="#8c8c8c"/><rect x="3" y="0" width="1" height="1" fill="#8c8c8c"/><rect x="3" y="4" width="1" height="1" fill="#8c8c8c"/><rect x="3" y="8" width="1" height="1" fill="#8c8c8c"/><rect x="3" y="12" width="1" height="1" fill="#8c8c8c"/><rect x="3" y="16" width="1" height="1" fill="#8c8c8c"/><rect x="3" y="20" width="1" height="1" fill="#8c8c8c"/><rect x="3" y="24" width="1" height="1" fill="#8c8c8c"/><rect x="3" y="28" width="1" height="1" fill="#8c8c8c"/><rect x="3" y="32" width="1" height="1" fill="#8c8c8c"/></svg>
<svg style="left:40px;top:857px;" width="6" height="20"><rect x="0" y="0" width="1" height="1" fill="#8c8c8c"/><rect x="0" y="4" width="1" height="1" fill="#8c8c8c"/><rect x="0" y="8" width="1" height="1" fill="#8c8c8c"/><rect x="0" y="12" width="1" height="1" fill="#8c8c8c"/><rect x="0" y="16" width="1" height="1" fill="#8c8c8c"/><rect x="3" y="0" width="1" height="1" fill="#8c8c8c"/><rect x="3" y="4" width="1" height="1" fill="#8c8c8c"/><rect x="3" y="8" width="1" height="1" fill="#8c8c8c"/><rect x="3" y="12" width="1" height="1" fill="#8c8c8c"/><rect x="3" y="16" width="1" height="1" fill="#8c8c8c"/></svg>
<svg style="left:0px;top:800px;" width="1460" height="30"><rect x="54.0" y="20.2" width="1316.5" height="1" fill="#a4a4a4"/><rect x="54.00" y="5" width="1" height="21.5" fill="#d8d8d8"/><rect x="68.62" y="22.3" width="1" height="2.8" fill="#c8c8c8"/><rect x="83.23" y="22.3" width="1" height="2.8" fill="#c8c8c8"/><rect x="97.85" y="22.3" width="1" height="2.8" fill="#c8c8c8"/><rect x="112.47" y="22.3" width="1" height="2.8" fill="#c8c8c8"/><rect x="127.08" y="22.3" width="1" height="4" fill="#d4d4d4"/><rect x="141.70" y="22.3" width="1" height="2.8" fill="#c8c8c8"/><rect x="156.32" y="22.3" width="1" height="2.8" fill="#c8c8c8"/><rect x="170.93" y="22.3" width="1" height="2.8" fill="#c8c8c8"/><rect x="185.55" y="22.3" width="1" height="2.8" fill="#c8c8c8"/><rect x="200.17" y="22.3" width="1" height="4" fill="#d4d4d4"/><rect x="214.78" y="22.3" width="1" height="2.8" fill="#c8c8c8"/><rect x="229.40" y="22.3" width="1" height="2.8" fill="#c8c8c8"/><rect x="244.02" y="22.3" width="1" height="2.8" fill="#c8c8c8"/><rect x="258.63" y="22.3" width="1" height="2.8" fill="#c8c8c8"/><rect x="273.25" y="22.3" width="1" height="4" fill="#d4d4d4"/><rect x="287.87" y="22.3" width="1" height="2.8" fill="#c8c8c8"/><rect x="302.48" y="22.3" width="1" height="2.8" fill="#c8c8c8"/><rect x="317.10" y="22.3" width="1" height="2.8" fill="#c8c8c8"/><rect x="331.72" y="22.3" width="1" height="2.8" fill="#c8c8c8"/><rect x="346.33" y="22.3" width="1" height="4" fill="#d4d4d4"/><rect x="360.95" y="22.3" width="1" height="2.8" fill="#c8c8c8"/><rect x="375.57" y="22.3" width="1" height="2.8" fill="#c8c8c8"/><rect x="390.18" y="22.3" width="1" height="2.8" fill="#c8c8c8"/><rect x="404.80" y="22.3" width="1" height="2.8" fill="#c8c8c8"/><rect x="419.42" y="22.3" width="1" height="4" fill="#d4d4d4"/><rect x="434.03" y="22.3" width="1" height="2.8" fill="#c8c8c8"/><rect x="448.65" y="22.3" width="1" height="2.8" fill="#c8c8c8"/><rect x="463.27" y="22.3" width="1" height="2.8" fill="#c8c8c8"/><rect x="477.88" y="22.3" width="1" height="2.8" fill="#c8c8c8"/><rect x="492.50" y="5" width="1" height="21.5" fill="#d8d8d8"/><rect x="507.12" y="22.3" width="1" height="2.8" fill="#c8c8c8"/><rect x="521.73" y="22.3" width="1" height="2.8" fill="#c8c8c8"/><rect x="536.35" y="22.3" width="1" height="2.8" fill="#c8c8c8"/><rect x="550.97" y="22.3" width="1" height="2.8" fill="#c8c8c8"/><rect x="565.58" y="22.3" width="1" height="4" fill="#d4d4d4"/><rect x="580.20" y="22.3" width="1" height="2.8" fill="#c8c8c8"/><rect x="594.82" y="22.3" width="1" height="2.8" fill="#c8c8c8"/><rect x="609.43" y="22.3" width="1" height="2.8" fill="#c8c8c8"/><rect x="624.05" y="22.3" width="1" height="2.8" fill="#c8c8c8"/><rect x="638.67" y="22.3" width="1" height="4" fill="#d4d4d4"/><rect x="653.28" y="22.3" width="1" height="2.8" fill="#c8c8c8"/><rect x="667.90" y="22.3" width="1" height="2.8" fill="#c8c8c8"/><rect x="682.52" y="22.3" width="1" height="2.8" fill="#c8c8c8"/><rect x="697.13" y="22.3" width="1" height="2.8" fill="#c8c8c8"/><rect x="711.75" y="22.3" width="1" height="4" fill="#d4d4d4"/><rect x="726.37" y="22.3" width="1" height="2.8" fill="#c8c8c8"/><rect x="740.98" y="22.3" width="1" height="2.8" fill="#c8c8c8"/><rect x="755.60" y="22.3" width="1" height="2.8" fill="#c8c8c8"/><rect x="770.22" y="22.3" width="1" height="2.8" fill="#c8c8c8"/><rect x="784.83" y="22.3" width="1" height="4" fill="#d4d4d4"/><rect x="799.45" y="22.3" width="1" height="2.8" fill="#c8c8c8"/><rect x="814.07" y="22.3" width="1" height="2.8" fill="#c8c8c8"/><rect x="828.68" y="22.3" width="1" height="2.8" fill="#c8c8c8"/><rect x="843.30" y="22.3" width="1" height="2.8" fill="#c8c8c8"/><rect x="857.92" y="22.3" width="1" height="4" fill="#d4d4d4"/><rect x="872.53" y="22.3" width="1" height="2.8" fill="#c8c8c8"/><rect x="887.15" y="22.3" width="1" height="2.8" fill="#c8c8c8"/><rect x="901.77" y="22.3" width="1" height="2.8" fill="#c8c8c8"/><rect x="916.38" y="22.3" width="1" height="2.8" fill="#c8c8c8"/><rect x="931.00" y="5" width="1" height="21.5" fill="#d8d8d8"/><rect x="945.62" y="22.3" width="1" height="2.8" fill="#c8c8c8"/><rect x="960.23" y="22.3" width="1" height="2.8" fill="#c8c8c8"/><rect x="974.85" y="22.3" width="1" height="2.8" fill="#c8c8c8"/><rect x="989.47" y="22.3" width="1" height="2.8" fill="#c8c8c8"/><rect x="1004.08" y="22.3" width="1" height="4" fill="#d4d4d4"/><rect x="1018.70" y="22.3" width="1" height="2.8" fill="#c8c8c8"/><rect x="1033.32" y="22.3" width="1" height="2.8" fill="#c8c8c8"/><rect x="1047.93" y="22.3" width="1" height="2.8" fill="#c8c8c8"/><rect x="1062.55" y="22.3" width="1" height="2.8" fill="#c8c8c8"/><rect x="1077.17" y="22.3" width="1" height="4" fill="#d4d4d4"/><rect x="1091.78" y="22.3" width="1" height="2.8" fill="#c8c8c8"/><rect x="1106.40" y="22.3" width="1" height="2.8" fill="#c8c8c8"/><rect x="1121.02" y="22.3" width="1" height="2.8" fill="#c8c8c8"/><rect x="1135.63" y="22.3" width="1" height="2.8" fill="#c8c8c8"/><rect x="1150.25" y="22.3" width="1" height="4" fill="#d4d4d4"/><rect x="1164.87" y="22.3" width="1" height="2.8" fill="#c8c8c8"/><rect x="1179.48" y="22.3" width="1" height="2.8" fill="#c8c8c8"/><rect x="1194.10" y="22.3" width="1" height="2.8" fill="#c8c8c8"/><rect x="1208.72" y="22.3" width="1" height="2.8" fill="#c8c8c8"/><rect x="1223.33" y="22.3" width="1" height="4" fill="#d4d4d4"/><rect x="1237.95" y="22.3" width="1" height="2.8" fill="#c8c8c8"/><rect x="1252.57" y="22.3" width="1" height="2.8" fill="#c8c8c8"/><rect x="1267.18" y="22.3" width="1" height="2.8" fill="#c8c8c8"/><rect x="1281.80" y="22.3" width="1" height="2.8" fill="#c8c8c8"/><rect x="1296.42" y="22.3" width="1" height="4" fill="#d4d4d4"/><rect x="1311.03" y="22.3" width="1" height="2.8" fill="#c8c8c8"/><rect x="1325.65" y="22.3" width="1" height="2.8" fill="#c8c8c8"/><rect x="1340.27" y="22.3" width="1" height="2.8" fill="#c8c8c8"/><rect x="1354.88" y="22.3" width="1" height="2.8" fill="#c8c8c8"/><rect x="1369.50" y="5" width="1" height="21.5" fill="#d8d8d8"/><rect x="123" y="3.5" width="9" height="17" fill="#6e9fe6"/></svg>
<span style="left:50.70px;top:804.39px;font-size:11px;line-height:14px;color:#d0d0d0;letter-spacing:0.000px;">0</span>
<span style="left:133.20px;top:804.39px;font-size:11px;line-height:14px;color:#7ba7e8;letter-spacing:0.000px;">5</span>
<span style="left:193.87px;top:804.39px;font-size:11px;line-height:14px;color:#d0d0d0;letter-spacing:-0.635px;">10</span>
<span style="left:266.95px;top:804.39px;font-size:11px;line-height:14px;color:#d0d0d0;letter-spacing:-0.635px;">15</span>
<span style="left:340.03px;top:804.39px;font-size:11px;line-height:14px;color:#d0d0d0;letter-spacing:-0.635px;">20</span>
<span style="left:413.12px;top:804.39px;font-size:11px;line-height:14px;color:#d0d0d0;letter-spacing:-0.635px;">25</span>
<span style="left:486.20px;top:804.39px;font-size:11px;line-height:14px;color:#d0d0d0;letter-spacing:-0.635px;">30</span>
<span style="left:559.28px;top:804.39px;font-size:11px;line-height:14px;color:#d0d0d0;letter-spacing:-0.635px;">35</span>
<span style="left:632.37px;top:804.39px;font-size:11px;line-height:14px;color:#d0d0d0;letter-spacing:-0.635px;">40</span>
<span style="left:705.45px;top:804.39px;font-size:11px;line-height:14px;color:#d0d0d0;letter-spacing:-0.635px;">45</span>
<span style="left:778.53px;top:804.39px;font-size:11px;line-height:14px;color:#d0d0d0;letter-spacing:-0.635px;">50</span>
<span style="left:851.62px;top:804.39px;font-size:11px;line-height:14px;color:#d0d0d0;letter-spacing:-0.635px;">55</span>
<span style="left:924.70px;top:804.39px;font-size:11px;line-height:14px;color:#d0d0d0;letter-spacing:-0.635px;">60</span>
<span style="left:997.78px;top:804.39px;font-size:11px;line-height:14px;color:#d0d0d0;letter-spacing:-0.635px;">65</span>
<span style="left:1070.87px;top:804.39px;font-size:11px;line-height:14px;color:#d0d0d0;letter-spacing:-0.635px;">70</span>
<span style="left:1143.95px;top:804.39px;font-size:11px;line-height:14px;color:#d0d0d0;letter-spacing:-0.635px;">75</span>
<span style="left:1217.03px;top:804.39px;font-size:11px;line-height:14px;color:#d0d0d0;letter-spacing:-0.635px;">80</span>
<span style="left:1290.12px;top:804.39px;font-size:11px;line-height:14px;color:#d0d0d0;letter-spacing:-0.635px;">85</span>
<span style="left:1363.20px;top:804.39px;font-size:11px;line-height:14px;color:#d0d0d0;letter-spacing:-0.635px;">90</span>
<div style="left:48px;top:829px;width:66px;height:17px;background:#2c2c2c;border:1px solid #4a4a4a;border-radius:2px;"></div>
<span style="left:53.00px;top:830.99px;font-size:11px;line-height:14px;color:#dcdcdc;letter-spacing:-0.197px;">0 F</span>
<svg style="left:104px;top:830.5px;" width="8" height="14"><path d="M1 5 L4 2 L7 5 M1 9 L4 12 L7 9" stroke="#8a8a8a" stroke-width="1.1" fill="none"/></svg>
<div style="left:122px;top:829px;width:1254px;height:17px;background:#595959;border-radius:2px;"></div>
<svg style="left:126px;top:832px;" width="6" height="11"><path d="M1 0 V11 M4.5 0 V11" stroke="#8a8a8a" stroke-width="1"/></svg>
<span style="left:136.70px;top:830.69px;font-size:11px;line-height:14px;color:#e0e0e0;letter-spacing:-0.197px;">0 F</span>
<span style="left:1337.50px;top:830.69px;font-size:11px;line-height:14px;color:#e0e0e0;letter-spacing:-0.337px;">90 F</span>
<svg style="left:1367px;top:832px;" width="6" height="11"><path d="M1 0 V11 M4.5 0 V11" stroke="#8a8a8a" stroke-width="1"/></svg>
<div style="left:1383px;top:806px;width:66px;height:17px;background:#2c2c2c;border:1px solid #4a4a4a;border-radius:2px;"></div>
<span style="left:1388.50px;top:807.99px;font-size:11px;line-height:14px;color:#dcdcdc;letter-spacing:-0.197px;">5 F</span>
<svg style="left:1439px;top:807.5px;" width="8" height="14"><path d="M1 5 L4 2 L7 5 M1 9 L4 12 L7 9" stroke="#8a8a8a" stroke-width="1.1" fill="none"/></svg>
<div style="left:1383px;top:829px;width:66px;height:17px;background:#2c2c2c;border:1px solid #4a4a4a;border-radius:2px;"></div>
<span style="left:1388.50px;top:830.99px;font-size:11px;line-height:14px;color:#dcdcdc;letter-spacing:-0.337px;">90 F</span>
<svg style="left:1439px;top:830.5px;" width="8" height="14"><path d="M1 5 L4 2 L7 5 M1 9 L4 12 L7 9" stroke="#8a8a8a" stroke-width="1.1" fill="none"/></svg>
<svg style="left:449px;top:852px;background:#4a4a4a;border-radius:2px;" width="26" height="26" viewBox="0 0 26 26"><rect x="3.5" y="3.5" width="19" height="18" rx="2" fill="#f4f2f0" stroke="#161616" stroke-width="1"/><rect x="3.5" y="3.5" width="19" height="3" fill="#161616"/><path d="M8.5 17.5 L17.5 9" stroke="#6a3216" stroke-width="5.4" stroke-linecap="round"/><path d="M8.5 17.5 L17.5 9" stroke="#c4703f" stroke-width="3.8" stroke-linecap="round"/><circle cx="8" cy="18" r="3.2" fill="#c4703f" stroke="#6a3216" stroke-width="0.8"/><path d="M16 7.5 l2.5 -1 l1.5 2.5 l-1.5 2" stroke="#6a3216" stroke-width="0.8" fill="#c4703f"/><path d="M25 20 V25 H20 Z" fill="#b4b4b4" opacity="0.8"/></svg>
<svg style="left:487.0px;top:852px;background:#4a4a4a;border-radius:2px;border-radius:2px 0 0 2px;" width="27.65" height="26" viewBox="0 0 27.65 26"><rect x="6.2" y="7" width="3" height="12" fill="#161616"/><path d="M19.5 7 V19 L9.2 13Z" fill="#161616"/><rect x="26.85" y="0" width="0.8" height="26" fill="#3e3e3e"/></svg>
<svg style="left:514.65px;top:852px;background:#4a4a4a;border-radius:2px;border-radius:0;" width="27.65" height="26" viewBox="0 0 27.65 26"><rect x="7.2" y="6.5" width="2.8" height="13" fill="#f2f2f2" stroke="#161616" stroke-width="0.6"/><path d="M20.5 7 V19 L10.6 13Z" fill="#161616"/><rect x="26.85" y="0" width="0.8" height="26" fill="#3e3e3e"/></svg>
<svg style="left:542.3px;top:852px;background:#4a4a4a;border-radius:2px;border-radius:0;" width="27.65" height="26" viewBox="0 0 27.65 26"><path d="M16.5 7 V19 L6.5 13Z" fill="#161616"/><rect x="17.6" y="7" width="3" height="12" fill="#161616"/><rect x="26.85" y="0" width="0.8" height="26" fill="#3e3e3e"/></svg>
<svg style="left:569.95px;top:852px;background:#4a4a4a;border-radius:2px;border-radius:0;" width="27.65" height="26" viewBox="0 0 27.65 26"><path d="M7.5 5 L22 13 L7.5 21Z" fill="#161616"/><rect x="26.85" y="0" width="0.8" height="26" fill="#3e3e3e"/></svg>
<svg style="left:597.6px;top:852px;background:#4a4a4a;border-radius:2px;border-radius:0;" width="27.65" height="26" viewBox="0 0 27.65 26"><rect x="6.8" y="7" width="3" height="12" fill="#161616"/><path d="M10.9 7 V19 L20.8 13Z" fill="#161616"/><rect x="26.85" y="0" width="0.8" height="26" fill="#3e3e3e"/></svg>
<svg style="left:625.25px;top:852px;background:#4a4a4a;border-radius:2px;border-radius:0;" width="27.65" height="26" viewBox="0 0 27.65 26"><path d="M7 7 V19 L17 13Z" fill="#161616"/><rect x="17.4" y="6.5" width="2.8" height="13" fill="#f2f2f2" stroke="#161616" stroke-width="0.6"/><rect x="26.85" y="0" width="0.8" height="26" fill="#3e3e3e"/></svg>
<svg style="left:652.9px;top:852px;background:#4a4a4a;border-radius:2px;border-radius:0 2px 2px 0;" width="27.65" height="26" viewBox="0 0 27.65 26"><path d="M7.5 7 V19 L17.8 13Z" fill="#161616"/><rect x="17.8" y="7" width="3" height="12" fill="#161616"/></svg>
<svg style="left:693px;top:852px;background:#4d7ab5;border-radius:2px;" width="26" height="26" viewBox="0 0 26 26"><path d="M13 18.5 H9.5 A5.5 5.5 0 0 1 9.5 7 H16.5 A5.5 5.5 0 0 1 18.5 17.6" stroke="#0c1a33" stroke-width="2.5" fill="none"/><path d="M19.5 14 L17.8 20.5 L12 17.5Z" fill="#0c1a33"/><path d="M25 20 V25 H20 Z" fill="#9fb6d8" opacity="0.8"/></svg>
<svg style="left:720px;top:852px;background:#4d7ab5;border-radius:2px;" width="27" height="26" viewBox="0 0 27 26"><rect x="7" y="2" width="12" height="22" fill="#1a1208"/><rect x="9.2" y="2.8" width="7.6" height="5.6" fill="#f2a654"/><rect x="9.2" y="10.2" width="7.6" height="5.6" fill="#f2a654"/><rect x="9.2" y="17.6" width="7.6" height="5.6" fill="#f2a654"/><rect x="7.4" y="3" width="1.2" height="1.3" fill="#f2a654"/><rect x="17.4" y="3" width="1.2" height="1.3" fill="#f2a654"/><rect x="7.4" y="5.6" width="1.2" height="1.3" fill="#f2a654"/><rect x="17.4" y="5.6" width="1.2" height="1.3" fill="#f2a654"/><rect x="7.4" y="8.2" width="1.2" height="1.3" fill="#f2a654"/><rect x="17.4" y="8.2" width="1.2" height="1.3" fill="#f2a654"/><rect x="7.4" y="10.8" width="1.2" height="1.3" fill="#f2a654"/><rect x="17.4" y="10.8" width="1.2" height="1.3" fill="#f2a654"/><rect x="7.4" y="13.4" width="1.2" height="1.3" fill="#f2a654"/><rect x="17.4" y="13.4" width="1.2" height="1.3" fill="#f2a654"/><rect x="7.4" y="16" width="1.2" height="1.3" fill="#f2a654"/><rect x="17.4" y="16" width="1.2" height="1.3" fill="#f2a654"/><rect x="7.4" y="18.6" width="1.2" height="1.3" fill="#f2a654"/><rect x="17.4" y="18.6" width="1.2" height="1.3" fill="#f2a654"/><rect x="7.4" y="21.2" width="1.2" height="1.3" fill="#f2a654"/><rect x="17.4" y="21.2" width="1.2" height="1.3" fill="#f2a654"/><path d="M26 20 V25 H21 Z" fill="#9fb6d8" opacity="0.8"/></svg>
<svg style="left:751px;top:852px;background:#4d7ab5;border-radius:2px;" width="26" height="26" viewBox="0 0 26 26"><path d="M4.5 16 L7 21.5 L10.5 20 L16 22.5 L10 6.5 L8 12.5 L4.5 14Z" fill="#0c1a33"/><path d="M14 8 A6 6 0 0 1 18.5 14.5 M15.5 5.2 A9 9 0 0 1 21.5 14 M17 2.6 A12 12 0 0 1 24.3 13.5" stroke="#0c1a33" stroke-width="1.5" fill="none"/></svg>
<svg style="left:789px;top:852px;background:#464646;border-radius:2px;" width="26" height="26" viewBox="0 0 26 26"><circle cx="13" cy="13" r="9" fill="#5a4848" stroke="#3c3030" stroke-width="1"/><path d="M9.5 16.5 L16 10" stroke="#3c3030" stroke-width="2.6" stroke-linecap="round"/><path d="M25 20 V25 H20 Z" fill="#b4b4b4" opacity="0.8"/></svg>
<svg style="left:816px;top:852px;background:#4a4a4a;border-radius:2px;" width="27" height="26" viewBox="0 0 27 26"><circle cx="13" cy="13" r="9.3" fill="#e0565c" stroke="#2a0808" stroke-width="1.2"/><path d="M11 7.5 A6.5 6.5 0 0 0 11 18.5 M15 7.5 A6.5 6.5 0 0 1 15 18.5" stroke="#2a0808" stroke-width="2.2" fill="none"/></svg>
<svg style="left:844px;top:852px;background:#4a4a4a;border-radius:2px;" width="27" height="26" viewBox="0 0 27 26"><circle cx="13" cy="13" r="9.3" fill="#e0565c" stroke="#2a0808" stroke-width="1.2"/><rect x="11.9" y="7.6" width="2.2" height="10.8" fill="#2a0808" transform="rotate(0 13 13)"/><rect x="11.9" y="7.6" width="2.2" height="10.8" fill="#2a0808" transform="rotate(60 13 13)"/><rect x="11.9" y="7.6" width="2.2" height="10.8" fill="#2a0808" transform="rotate(120 13 13)"/><circle cx="13" cy="13" r="4" fill="#2a0808"/><circle cx="13" cy="13" r="1.8" fill="#e0565c"/></svg>
<svg style="left:883px;top:852px;background:#4d7ab5;border-radius:2px;" width="27" height="26" viewBox="0 0 27 26"><g transform="translate(0.1 0.1) scale(0.76)"><g fill="#f2a654" stroke="#3a2208" stroke-width="1.2" stroke-linejoin="round"><path d="M17 3.5 L21.6 9.4 H19.1 V14.9 H24.6 V12.4 L30.5 17 L24.6 21.6 V19.1 H19.1 V24.6 H21.6 L17 30.5 L12.4 24.6 H14.9 V19.1 H9.4 V21.6 L3.5 17 L9.4 12.4 V14.9 H14.9 V9.4 H12.4 Z"/></g></g></svg>
<svg style="left:910px;top:852px;background:#4d7ab5;border-radius:2px;" width="27" height="26" viewBox="0 0 27 26"><g transform="translate(0.3 0.1) scale(0.76)"><g fill="none" stroke="#3a2208" stroke-width="5.4"><path d="M8.5 22 A10 10 0 0 1 22 8"/><path d="M25.5 12 A10 10 0 0 1 12 26"/></g><g fill="none" stroke="#f2a654" stroke-width="3.4"><path d="M8.5 22 A10 10 0 0 1 22 8"/><path d="M25.5 12 A10 10 0 0 1 12 26"/></g><path d="M20 3.5 L27.5 8.5 L19.5 12.5 Z" fill="#f2a654" stroke="#3a2208" stroke-width="1"/><path d="M14 30.5 L6.5 25.5 L14.5 21.5 Z" fill="#f2a654" stroke="#3a2208" stroke-width="1"/></g></svg>
<svg style="left:938px;top:852px;background:#4d7ab5;border-radius:2px;" width="27" height="26" viewBox="0 0 27 26"><g transform="translate(0.3 0) scale(0.76)"><rect x="7.5" y="8" width="19" height="19" rx="1.5" fill="#f2a654" stroke="#3a2208" stroke-width="1.4"/><path d="M8 17.5 H16.5 V26.5 M16.5 17.5 L25.5 9" stroke="#3a2208" stroke-width="1.4" fill="none"/></g></svg>
<svg style="left:966px;top:852px;background:#4d7ab5;border-radius:2px;" width="27" height="26" viewBox="0 0 27 26"><circle cx="13.5" cy="13" r="10.4" fill="none" stroke="#3a2208" stroke-width="2.6"/><circle cx="13.5" cy="13" r="10.4" fill="none" stroke="#f3b066" stroke-width="1.3"/><circle cx="13.5" cy="13" r="7.6" fill="none" stroke="#f3b066" stroke-width="0.9"/><path d="M10.5 18.5 V8 H14.2 A3.2 3.2 0 0 1 14.2 14.4 H10.5" stroke="#0c1a33" stroke-width="2.6" fill="none"/></svg>
<svg style="left:995px;top:852px;background:#464646;border-radius:2px;" width="26" height="26" viewBox="0 0 26 26"><circle cx="5" cy="5.5" r="2.6" fill="#e59a55"/><circle cx="13" cy="5.5" r="2.6" fill="#e59a55"/><circle cx="21" cy="5.5" r="2.6" fill="#141414"/><circle cx="5" cy="13.1" r="2.6" fill="#e59a55"/><circle cx="13" cy="13.1" r="2.6" fill="#e59a55"/><circle cx="21" cy="13.1" r="2.6" fill="#141414"/><circle cx="5" cy="20.7" r="2.6" fill="#141414"/><circle cx="13" cy="20.7" r="2.6" fill="#141414"/><circle cx="21" cy="20.7" r="2.6" fill="#141414"/></svg>
<svg style="left:1033px;top:852px;background:#e9fb73;border-radius:2px;" width="26" height="26" viewBox="0 0 26 26"><circle cx="8" cy="8.5" r="5.2" fill="#eeeeee" stroke="#3a3a2a" stroke-width="1"/><circle cx="12.5" cy="13" r="5.2" fill="#e8b27a" stroke="#3a3a2a" stroke-width="1"/><circle cx="17.5" cy="17.5" r="5.6" fill="#f2f2f2" stroke="#3a3a2a" stroke-width="1"/><path d="M12.5 18.5 H20 M17.5 12 V18.5" stroke="#9a9a9a" stroke-width="0.8"/></svg>
<div style="left:39px;top:882px;width:1034px;height:141px;background:#3c3c3c;border:1px solid #494949;"></div>
<div style="left:40px;top:906px;width:1032px;height:1px;background:#474747;"></div>
<svg style="left:46px;top:889px;" width="14" height="10"><rect x="0" y="0" width="14" height="2" fill="#a8a8a8"/><rect x="0" y="4" width="14" height="2" fill="#a8a8a8"/><rect x="0" y="8" width="14" height="2" fill="#a8a8a8"/></svg>
<span style="left:70.00px;top:887.19px;font-size:11px;line-height:14px;color:#d4d4d4;letter-spacing:-0.403px;">Create</span>
<span style="left:116.00px;top:887.19px;font-size:11px;line-height:14px;color:#d4d4d4;letter-spacing:-0.364px;">V-Ray</span>
<span style="left:159.70px;top:887.19px;font-size:11px;line-height:14px;color:#e6e87a;letter-spacing:-0.385px;">Edit</span>
<span style="left:192.50px;top:887.19px;font-size:11px;line-height:14px;color:#d4d4d4;letter-spacing:-0.548px;">View</span>
<span style="left:230.00px;top:887.19px;font-size:11px;line-height:14px;color:#d4d4d4;letter-spacing:-0.314px;">Select</span>
<span style="left:273.30px;top:887.19px;font-size:11px;line-height:14px;color:#d4d4d4;letter-spacing:0.011px;">Material</span>
<span style="left:327.50px;top:887.19px;font-size:11px;line-height:14px;color:#d4d4d4;letter-spacing:-0.345px;">Texture</span>
<svg style="left:44px;top:909px;" width="22" height="6"><rect x="0" y="0" width="1" height="1" fill="#8c8c8c"/><rect x="3" y="0" width="1" height="1" fill="#8c8c8c"/><rect x="6" y="0" width="1" height="1" fill="#8c8c8c"/><rect x="9" y="0" width="1" height="1" fill="#8c8c8c"/><rect x="12" y="0" width="1" height="1" fill="#8c8c8c"/><rect x="15" y="0" width="1" height="1" fill="#8c8c8c"/><rect x="18" y="0" width="1" height="1" fill="#8c8c8c"/><rect x="0" y="3" width="1" height="1" fill="#8c8c8c"/><rect x="3" y="3" width="1" height="1" fill="#8c8c8c"/><rect x="6" y="3" width="1" height="1" fill="#8c8c8c"/><rect x="9" y="3" width="1" height="1" fill="#8c8c8c"/><rect x="12" y="3" width="1" height="1" fill="#8c8c8c"/><rect x="15" y="3" width="1" height="1" fill="#8c8c8c"/><rect x="18" y="3" width="1" height="1" fill="#8c8c8c"/></svg>
<svg style="left:41px;top:916px;background:#4a4a4a;border-radius:2px;" width="26" height="26" viewBox="0 0 26 26"><path d="M13 5.5 V20.5 M5.5 13 H20.5" stroke="#c4c4c4" stroke-width="1.6"/><path d="M25 20 V25 H20 Z" fill="#9c9c9c" opacity="0.8"/></svg>
<svg style="left:41px;top:944px;background:#444444;border-radius:2px;" width="26" height="26" viewBox="0 0 26 26"><path d="M7 19.5 L19 7 M11 7 H19 V15" stroke="#5e5e5e" stroke-width="1.4" fill="none"/></svg>
<div style="left:1076px;top:882px;width:374px;height:142px;background:#3c3c3c;border:1px solid #494949;"></div>
<div style="left:1077px;top:906px;width:372px;height:1px;background:#474747;"></div>
<svg style="left:1082px;top:890px;" width="14" height="10"><rect x="0" y="0" width="14" height="2" fill="#a8a8a8"/><rect x="0" y="4" width="14" height="2" fill="#a8a8a8"/><rect x="0" y="8" width="14" height="2" fill="#a8a8a8"/></svg>
<span style="left:1104.80px;top:888.19px;font-size:11px;line-height:14px;color:#707070;letter-spacing:-0.326px;">--</span>
<span style="left:1220.40px;top:888.19px;font-size:11px;line-height:14px;color:#707070;letter-spacing:-0.326px;">--</span>
<span style="left:1336.70px;top:888.19px;font-size:11px;line-height:14px;color:#707070;letter-spacing:-0.326px;">--</span>
<span style="left:1080.30px;top:916.49px;font-size:11px;line-height:14px;color:#d8d8d8;">X</span>
<div style="left:1091.5px;top:915px;width:107px;height:16.5px;background:#393939;border:1px solid #434343;border-radius:2px;"></div>
<span style="left:1096.50px;top:916.49px;font-size:11px;line-height:14px;color:#737373;letter-spacing:-0.279px;">0 cm</span>
<svg style="left:1190.0px;top:916.2px;" width="8" height="14"><path d="M1 5 L4 2 L7 5 M1 9 L4 12 L7 9" stroke="#5c5c5c" stroke-width="1.1" fill="none"/></svg>
<span style="left:1202.30px;top:916.49px;font-size:11px;line-height:14px;color:#d8d8d8;">X</span>
<div style="left:1213px;top:915px;width:107.5px;height:16.5px;background:#393939;border:1px solid #434343;border-radius:2px;"></div>
<span style="left:1218.00px;top:916.49px;font-size:11px;line-height:14px;color:#737373;letter-spacing:-0.279px;">0 cm</span>
<svg style="left:1312.0px;top:916.2px;" width="8" height="14"><path d="M1 5 L4 2 L7 5 M1 9 L4 12 L7 9" stroke="#5c5c5c" stroke-width="1.1" fill="none"/></svg>
<span style="left:1324.60px;top:916.49px;font-size:11px;line-height:14px;color:#d8d8d8;">H</span>
<div style="left:1336px;top:915px;width:109.5px;height:16.5px;background:#393939;border:1px solid #434343;border-radius:2px;"></div>
<span style="left:1341.00px;top:916.49px;font-size:11px;line-height:14px;color:#737373;letter-spacing:-0.036px;">0 °</span>
<svg style="left:1437.0px;top:916.2px;" width="8" height="14"><path d="M1 5 L4 2 L7 5 M1 9 L4 12 L7 9" stroke="#5c5c5c" stroke-width="1.1" fill="none"/></svg>
<span style="left:1080.30px;top:938.49px;font-size:11px;line-height:14px;color:#d8d8d8;">Y</span>
<div style="left:1091.5px;top:937px;width:107px;height:16.5px;background:#393939;border:1px solid #434343;border-radius:2px;"></div>
<span style="left:1096.50px;top:938.49px;font-size:11px;line-height:14px;color:#737373;letter-spacing:-0.279px;">0 cm</span>
<svg style="left:1190.0px;top:938.2px;" width="8" height="14"><path d="M1 5 L4 2 L7 5 M1 9 L4 12 L7 9" stroke="#5c5c5c" stroke-width="1.1" fill="none"/></svg>
<span style="left:1202.30px;top:938.49px;font-size:11px;line-height:14px;color:#d8d8d8;">Y</span>
<div style="left:1213px;top:937px;width:107.5px;height:16.5px;background:#393939;border:1px solid #434343;border-radius:2px;"></div>
<span style="left:1218.00px;top:938.49px;font-size:11px;line-height:14px;color:#737373;letter-spacing:-0.279px;">0 cm</span>
<svg style="left:1312.0px;top:938.2px;" width="8" height="14"><path d="M1 5 L4 2 L7 5 M1 9 L4 12 L7 9" stroke="#5c5c5c" stroke-width="1.1" fill="none"/></svg>
<span style="left:1324.60px;top:938.49px;font-size:11px;line-height:14px;color:#d8d8d8;">P</span>
<div style="left:1336px;top:937px;width:109.5px;height:16.5px;background:#393939;border:1px solid #434343;border-radius:2px;"></div>
<span style="left:1341.00px;top:938.49px;font-size:11px;line-height:14px;color:#737373;letter-spacing:-0.036px;">0 °</span>
<svg style="left:1437.0px;top:938.2px;" width="8" height="14"><path d="M1 5 L4 2 L7 5 M1 9 L4 12 L7 9" stroke="#5c5c5c" stroke-width="1.1" fill="none"/></svg>
<span style="left:1080.30px;top:960.49px;font-size:11px;line-height:14px;color:#d8d8d8;">Z</span>
<div style="left:1091.5px;top:959px;width:107px;height:16.5px;background:#393939;border:1px solid #434343;border-radius:2px;"></div>
<span style="left:1096.50px;top:960.49px;font-size:11px;line-height:14px;color:#737373;letter-spacing:-0.279px;">0 cm</span>
<svg style="left:1190.0px;top:960.2px;" width="8" height="14"><path d="M1 5 L4 2 L7 5 M1 9 L4 12 L7 9" stroke="#5c5c5c" stroke-width="1.1" fill="none"/></svg>
<span style="left:1202.30px;top:960.49px;font-size:11px;line-height:14px;color:#d8d8d8;">Z</span>
<div style="left:1213px;top:959px;width:107.5px;height:16.5px;background:#393939;border:1px solid #434343;border-radius:2px;"></div>
<span style="left:1218.00px;top:960.49px;font-size:11px;line-height:14px;color:#737373;letter-spacing:-0.279px;">0 cm</span>
<svg style="left:1312.0px;top:960.2px;" width="8" height="14"><path d="M1 5 L4 2 L7 5 M1 9 L4 12 L7 9" stroke="#5c5c5c" stroke-width="1.1" fill="none"/></svg>
<span style="left:1324.60px;top:960.49px;font-size:11px;line-height:14px;color:#d8d8d8;">B</span>
<div style="left:1336px;top:959px;width:109.5px;height:16.5px;background:#393939;border:1px solid #434343;border-radius:2px;"></div>
<span style="left:1341.00px;top:960.49px;font-size:11px;line-height:14px;color:#737373;letter-spacing:-0.036px;">0 °</span>
<svg style="left:1437.0px;top:960.2px;" width="8" height="14"><path d="M1 5 L4 2 L7 5 M1 9 L4 12 L7 9" stroke="#5c5c5c" stroke-width="1.1" fill="none"/></svg>
<div style="left:1091.5px;top:982px;width:106px;height:16.5px;background:#484848;border-radius:3px;"></div>
<span style="left:1098.00px;top:983.69px;font-size:11px;line-height:14px;color:#858585;letter-spacing:0.118px;">World</span>
<svg style="left:1183px;top:986.5px;" width="10" height="8"><path d="M1.5 2 L5 5.5 L8.5 2" stroke="#858585" stroke-width="1.1" fill="none"/></svg>
<div style="left:1213px;top:982px;width:107px;height:16.5px;background:#484848;border-radius:3px;"></div>
<span style="left:1220.00px;top:983.69px;font-size:11px;line-height:14px;color:#858585;letter-spacing:-0.629px;">Scale</span>
<svg style="left:1305px;top:986.5px;" width="10" height="8"><path d="M1.5 2 L5 5.5 L8.5 2" stroke="#858585" stroke-width="1.1" fill="none"/></svg>
<div style="left:1336px;top:982px;width:109px;height:16.5px;background:#5a5a5a;border-radius:3px;"></div>
<span style="left:1376.00px;top:983.79px;font-size:11px;line-height:14px;color:#e6e6e6;letter-spacing:0.246px;">Apply</span>
<div style="left:0px;top:1026px;width:1456px;height:1px;background:#4a4a4a;"></div>
<svg style="left:5px;top:1033.5px;" width="14" height="10"><rect x="0" y="0" width="14" height="2" fill="#8e8e8e"/><rect x="0" y="4" width="14" height="2" fill="#8e8e8e"/><rect x="0" y="8" width="14" height="2" fill="#8e8e8e"/></svg>
<span style="left:30.00px;top:1032.19px;font-size:11px;line-height:14px;color:#cfcfcf;letter-spacing:-0.082px;">Azimuth: 205.8°, Altitude: -18.0°  NE</span>
<div style="left:1456px;top:51px;width:464px;height:21px;background:#2d2d2d;"></div>
<div style="left:1456px;top:51px;width:50px;height:21px;background:#3c3c3c;border-top:1px solid #4a4a4a;border-left:1px solid #474747;border-right:1px solid #474747;border-radius:2px 2px 0 0;"></div>
<span style="left:1462.00px;top:54.99px;font-size:11px;line-height:14px;color:#e4e4e4;letter-spacing:-0.132px;">Objects</span>
<span style="left:1511.50px;top:54.99px;font-size:11px;line-height:14px;color:#7e7e7e;letter-spacing:-0.809px;">Takes</span>
<div style="left:1456px;top:72px;width:464px;height:24px;background:#3c3c3c;border-top:1px solid #505050;border-bottom:1px solid #343434;"></div>
<svg style="left:1463px;top:80px;" width="14" height="10"><rect x="0" y="0" width="14" height="2" fill="#a8a8a8"/><rect x="0" y="4" width="14" height="2" fill="#a8a8a8"/><rect x="0" y="8" width="14" height="2" fill="#a8a8a8"/></svg>
<span style="left:1487.30px;top:77.19px;font-size:11px;line-height:14px;color:#d4d4d4;letter-spacing:-0.675px;">File</span>
<span style="left:1518.50px;top:77.19px;font-size:11px;line-height:14px;color:#d4d4d4;letter-spacing:-0.318px;">Edit</span>
<span style="left:1551.50px;top:77.19px;font-size:11px;line-height:14px;color:#d4d4d4;letter-spacing:-0.381px;">View</span>
<span style="left:1589.00px;top:77.19px;font-size:11px;line-height:14px;color:#d4d4d4;letter-spacing:0.042px;">Object</span>
<span style="left:1635.30px;top:77.19px;font-size:11px;line-height:14px;color:#dde87c;letter-spacing:-0.512px;">Tags</span>
<span style="left:1671.30px;top:77.19px;font-size:11px;line-height:14px;color:#d4d4d4;letter-spacing:-0.227px;">Bookmarks</span>
<svg style="left:1841px;top:76px;" width="78" height="16"><g fill="none" stroke="#8e8e8e" stroke-width="1.3">
<circle cx="5.5" cy="5.2" r="3.4"/><path d="M8 8 L12.5 13.8" stroke-width="2"/>
<path d="M27 2 L34 8.5 H31 V14 H23 V8.5 H20Z"/>
<path d="M40.5 2 H53.5 L48.5 8 V14.5 L45.5 13 V8Z"/>
<path d="M62.5 1.5 H74.5 V15 H62.5Z"/><path d="M68.5 5 V11.5 M65.2 8.2 H71.8" stroke-width="1.8"/></g></svg>
<div style="left:1456px;top:96px;width:464px;height:417px;background:#3c3c3c;"></div>
<div style="left:1458px;top:99px;width:458px;height:19.5px;background:#444444;"></div>
<div style="left:1458px;top:119px;width:458px;height:19.5px;background:#383838;"></div>
<div style="left:1458px;top:139px;width:458px;height:19.5px;background:#444444;"></div>
<div style="left:1458px;top:159px;width:458px;height:19.5px;background:#383838;"></div>
<div style="left:1458px;top:179px;width:458px;height:19.5px;background:#444444;"></div>
<div style="left:1458px;top:199px;width:458px;height:19.5px;background:#383838;"></div>
<div style="left:1458px;top:219px;width:458px;height:19.5px;background:#444444;"></div>
<div style="left:1563px;top:97px;width:1px;height:416px;background:rgba(255,255,255,0.07);"></div>
<div style="left:1602px;top:97px;width:1px;height:416px;background:rgba(255,255,255,0.07);"></div>
<svg style="left:1456px;top:97px;" width="50" height="140"><g stroke="#8a8a8a" stroke-width="1" fill="none" shape-rendering="crispEdges"><path d="M9.5 0 V7 M9.5 16 V131.5 H25"/><rect x="5.5" y="7.5" width="8" height="8" fill="#3f3f3f"/><path d="M7.5 11.5 H12"/><path d="M14 11.5 H19"/><path d="M22.5 20 V111.5 H30"/><path d="M22.5 31.5 H30"/><path d="M22.5 51.5 H30"/><path d="M22.5 71.5 H30"/><path d="M22.5 91.5 H30"/></g></svg>
<svg style="left:1475px;top:101px;" width="16" height="15"><path d="M2 1 V12.5 H14" stroke="#e8e8e8" stroke-width="1.8" fill="none"/><circle cx="9.5" cy="5" r="4.2" fill="#9fcdf8" stroke="#2a3e55" stroke-width="0.6"/></svg>
<span style="left:1493.30px;top:101.79px;font-size:11px;line-height:14px;color:#d4d4d4;letter-spacing:0.104px;">tap</span>
<svg style="left:1567px;top:102.5px;" width="13" height="12"><rect x="0.5" y="0.5" width="11" height="10.5" rx="1" fill="#8c8c8c"/><path d="M3 8.5 L9 2.5" stroke="#5a5a5a" stroke-width="1.4"/></svg>
<svg style="left:1584.2px;top:101.8px;" width="6" height="14"><circle cx="2.5" cy="2.5" r="2.4" fill="#868686"/><circle cx="2.5" cy="10.5" r="2.4" fill="#868686"/></svg>
<svg style="left:1485.5px;top:121px;" width="16" height="16"><path d="M7.5 2.5 L13 12.5 H2Z" fill="#8cc2f4" stroke="#1c3a66" stroke-width="0.9" stroke-linejoin="round"/><circle cx="7.5" cy="2" r="1.5" fill="#fff"/><circle cx="1.8" cy="12.8" r="1.5" fill="#fff"/><circle cx="13.2" cy="12.8" r="1.5" fill="#fff"/></svg>
<span style="left:1504.30px;top:121.79px;font-size:11px;line-height:14px;color:#d4d4d4;letter-spacing:-0.148px;">Oil Tank</span>
<svg style="left:1567px;top:122.5px;" width="13" height="12"><rect x="0.5" y="0.5" width="11" height="10.5" rx="1" fill="#8c8c8c"/><path d="M3 8.5 L9 2.5" stroke="#5a5a5a" stroke-width="1.4"/></svg>
<svg style="left:1584.2px;top:121.8px;" width="6" height="14"><circle cx="2.5" cy="2.5" r="2.4" fill="#868686"/><circle cx="2.5" cy="10.5" r="2.4" fill="#868686"/></svg>
<svg style="left:1605.5px;top:121px;" width="15" height="15"><circle cx="4.3" cy="4.3" r="3.4" fill="#d8774a"/><circle cx="3.4" cy="3.3" r="1.3" fill="#f0a47c"/><circle cx="10.2" cy="10" r="3.6" fill="#d8774a"/><circle cx="9.2" cy="9" r="1.4" fill="#f0a47c"/><path d="M6.5 6.5 L8 8" stroke="#8a4020" stroke-width="1.4"/></svg>
<svg style="left:1625.5px;top:121.3px;" width="15" height="15"><rect x="0.5" y="0.5" width="14" height="14" fill="#fbf3ee" stroke="#d9a27c" stroke-width="1.2"/><rect x="5.5" y="1.5" width="4" height="4" fill="#111"/><rect x="1.5" y="5.5" width="4" height="4" fill="#111"/><rect x="9.5" y="5.5" width="4" height="4" fill="#111"/><rect x="5.5" y="9.5" width="4" height="4" fill="#111"/><rect x="5.5" y="5.5" width="4" height="4" fill="#bfdcf6"/></svg>
<svg style="left:1485.5px;top:141px;" width="16" height="16"><path d="M7.5 2.5 L13 12.5 H2Z" fill="#8cc2f4" stroke="#1c3a66" stroke-width="0.9" stroke-linejoin="round"/><circle cx="7.5" cy="2" r="1.5" fill="#fff"/><circle cx="1.8" cy="12.8" r="1.5" fill="#fff"/><circle cx="13.2" cy="12.8" r="1.5" fill="#fff"/></svg>
<span style="left:1504.30px;top:141.79px;font-size:11px;line-height:14px;color:#d4d4d4;letter-spacing:-0.128px;">tap valve</span>
<svg style="left:1567px;top:142.5px;" width="13" height="12"><rect x="0.5" y="0.5" width="11" height="10.5" rx="1" fill="#8c8c8c"/><path d="M3 8.5 L9 2.5" stroke="#5a5a5a" stroke-width="1.4"/></svg>
<svg style="left:1584.2px;top:141.8px;" width="6" height="14"><circle cx="2.5" cy="2.5" r="2.4" fill="#868686"/><circle cx="2.5" cy="10.5" r="2.4" fill="#868686"/></svg>
<svg style="left:1605.5px;top:141px;" width="15" height="15"><circle cx="4.3" cy="4.3" r="3.4" fill="#d8774a"/><circle cx="3.4" cy="3.3" r="1.3" fill="#f0a47c"/><circle cx="10.2" cy="10" r="3.6" fill="#d8774a"/><circle cx="9.2" cy="9" r="1.4" fill="#f0a47c"/><path d="M6.5 6.5 L8 8" stroke="#8a4020" stroke-width="1.4"/></svg>
<svg style="left:1625.5px;top:141.3px;" width="15" height="15"><rect x="0.5" y="0.5" width="14" height="14" fill="#fbf3ee" stroke="#d9a27c" stroke-width="1.2"/><rect x="5.5" y="1.5" width="4" height="4" fill="#111"/><rect x="1.5" y="5.5" width="4" height="4" fill="#111"/><rect x="9.5" y="5.5" width="4" height="4" fill="#111"/><rect x="5.5" y="9.5" width="4" height="4" fill="#111"/><rect x="5.5" y="5.5" width="4" height="4" fill="#bfdcf6"/></svg>
<svg style="left:1485.5px;top:161px;" width="16" height="16"><path d="M7.5 2.5 L13 12.5 H2Z" fill="#8cc2f4" stroke="#1c3a66" stroke-width="0.9" stroke-linejoin="round"/><circle cx="7.5" cy="2" r="1.5" fill="#fff"/><circle cx="1.8" cy="12.8" r="1.5" fill="#fff"/><circle cx="13.2" cy="12.8" r="1.5" fill="#fff"/></svg>
<span style="left:1504.30px;top:161.79px;font-size:11px;line-height:14px;color:#d4d4d4;letter-spacing:-0.148px;">Oil Tank</span>
<svg style="left:1567px;top:162.5px;" width="13" height="12"><rect x="0.5" y="0.5" width="11" height="10.5" rx="1" fill="#8c8c8c"/><path d="M3 8.5 L9 2.5" stroke="#5a5a5a" stroke-width="1.4"/></svg>
<svg style="left:1584.2px;top:161.8px;" width="6" height="14"><circle cx="2.5" cy="2.5" r="2.4" fill="#868686"/><circle cx="2.5" cy="10.5" r="2.4" fill="#868686"/></svg>
<svg style="left:1605.5px;top:161px;" width="15" height="15"><circle cx="4.3" cy="4.3" r="3.4" fill="#d8774a"/><circle cx="3.4" cy="3.3" r="1.3" fill="#f0a47c"/><circle cx="10.2" cy="10" r="3.6" fill="#d8774a"/><circle cx="9.2" cy="9" r="1.4" fill="#f0a47c"/><path d="M6.5 6.5 L8 8" stroke="#8a4020" stroke-width="1.4"/></svg>
<svg style="left:1625.5px;top:161.3px;" width="15" height="15"><rect x="0.5" y="0.5" width="14" height="14" fill="#fbf3ee" stroke="#d9a27c" stroke-width="1.2"/><rect x="5.5" y="1.5" width="4" height="4" fill="#111"/><rect x="1.5" y="5.5" width="4" height="4" fill="#111"/><rect x="9.5" y="5.5" width="4" height="4" fill="#111"/><rect x="5.5" y="9.5" width="4" height="4" fill="#111"/><rect x="5.5" y="5.5" width="4" height="4" fill="#bfdcf6"/></svg>
<svg style="left:1485.5px;top:181px;" width="16" height="16"><path d="M7.5 2.5 L13 12.5 H2Z" fill="#8cc2f4" stroke="#1c3a66" stroke-width="0.9" stroke-linejoin="round"/><circle cx="7.5" cy="2" r="1.5" fill="#fff"/><circle cx="1.8" cy="12.8" r="1.5" fill="#fff"/><circle cx="13.2" cy="12.8" r="1.5" fill="#fff"/></svg>
<span style="left:1504.30px;top:181.79px;font-size:11px;line-height:14px;color:#d4d4d4;letter-spacing:-0.099px;">pipe</span>
<svg style="left:1567px;top:182.5px;" width="13" height="12"><rect x="0.5" y="0.5" width="11" height="10.5" rx="1" fill="#8c8c8c"/><path d="M3 8.5 L9 2.5" stroke="#5a5a5a" stroke-width="1.4"/></svg>
<svg style="left:1584.2px;top:181.8px;" width="6" height="14"><circle cx="2.5" cy="2.5" r="2.4" fill="#868686"/><circle cx="2.5" cy="10.5" r="2.4" fill="#868686"/></svg>
<svg style="left:1605.5px;top:181px;" width="15" height="15"><circle cx="4.3" cy="4.3" r="3.4" fill="#d8774a"/><circle cx="3.4" cy="3.3" r="1.3" fill="#f0a47c"/><circle cx="10.2" cy="10" r="3.6" fill="#d8774a"/><circle cx="9.2" cy="9" r="1.4" fill="#f0a47c"/><path d="M6.5 6.5 L8 8" stroke="#8a4020" stroke-width="1.4"/></svg>
<svg style="left:1625.5px;top:181.3px;" width="15" height="15"><rect x="0.5" y="0.5" width="14" height="14" fill="#fbf3ee" stroke="#d9a27c" stroke-width="1.2"/><rect x="5.5" y="1.5" width="4" height="4" fill="#111"/><rect x="1.5" y="5.5" width="4" height="4" fill="#111"/><rect x="9.5" y="5.5" width="4" height="4" fill="#111"/><rect x="5.5" y="9.5" width="4" height="4" fill="#111"/><rect x="5.5" y="5.5" width="4" height="4" fill="#bfdcf6"/></svg>
<svg style="left:1485.5px;top:201px;" width="16" height="16"><path d="M7.5 2.5 L13 12.5 H2Z" fill="#8cc2f4" stroke="#1c3a66" stroke-width="0.9" stroke-linejoin="round"/><circle cx="7.5" cy="2" r="1.5" fill="#fff"/><circle cx="1.8" cy="12.8" r="1.5" fill="#fff"/><circle cx="13.2" cy="12.8" r="1.5" fill="#fff"/></svg>
<span style="left:1504.30px;top:201.79px;font-size:11px;line-height:14px;color:#d4d4d4;letter-spacing:0.127px;">underbody</span>
<svg style="left:1567px;top:202.5px;" width="13" height="12"><rect x="0.5" y="0.5" width="11" height="10.5" rx="1" fill="#8c8c8c"/><path d="M3 8.5 L9 2.5" stroke="#5a5a5a" stroke-width="1.4"/></svg>
<svg style="left:1584.2px;top:201.8px;" width="6" height="14"><circle cx="2.5" cy="2.5" r="2.4" fill="#868686"/><circle cx="2.5" cy="10.5" r="2.4" fill="#868686"/></svg>
<svg style="left:1605.5px;top:201px;" width="15" height="15"><circle cx="4.3" cy="4.3" r="3.4" fill="#d8774a"/><circle cx="3.4" cy="3.3" r="1.3" fill="#f0a47c"/><circle cx="10.2" cy="10" r="3.6" fill="#d8774a"/><circle cx="9.2" cy="9" r="1.4" fill="#f0a47c"/><path d="M6.5 6.5 L8 8" stroke="#8a4020" stroke-width="1.4"/></svg>
<svg style="left:1625.5px;top:201.3px;" width="15" height="15"><rect x="0.5" y="0.5" width="14" height="14" fill="#fbf3ee" stroke="#d9a27c" stroke-width="1.2"/><rect x="5.5" y="1.5" width="4" height="4" fill="#111"/><rect x="1.5" y="5.5" width="4" height="4" fill="#111"/><rect x="9.5" y="5.5" width="4" height="4" fill="#111"/><rect x="5.5" y="9.5" width="4" height="4" fill="#111"/><rect x="5.5" y="5.5" width="4" height="4" fill="#bfdcf6"/></svg>
<svg style="left:1474px;top:221px;" width="16" height="16"><defs><radialGradient id="skyg" cx="0.4" cy="0.35" r="0.75"><stop offset="0" stop-color="#cfe6fb"/><stop offset="0.6" stop-color="#6aa0d8"/><stop offset="1" stop-color="#2a5288"/></radialGradient></defs><circle cx="7.5" cy="7.5" r="7" fill="url(#skyg)" stroke="#1e3a5c" stroke-width="0.8"/><path d="M3 6.5 h5 a1.6 1.6 0 0 0 0-3.2 M5 10.5 h6.5 a1.5 1.5 0 0 0 0-3 h-2" stroke="#f4f8fc" stroke-width="1.5" fill="none"/></svg>
<span style="left:1493.30px;top:221.79px;font-size:11px;line-height:14px;color:#d4d4d4;letter-spacing:-0.396px;">Physical Sky</span>
<svg style="left:1567px;top:222.5px;" width="13" height="12"><rect x="0.5" y="0.5" width="11" height="10.5" rx="1" fill="#8c8c8c"/><path d="M3 8.5 L9 2.5" stroke="#5a5a5a" stroke-width="1.4"/></svg>
<svg style="left:1584.2px;top:221.8px;" width="6" height="14"><circle cx="2.5" cy="2.5" r="2.4" fill="#868686"/><circle cx="2.5" cy="10.5" r="2.4" fill="#868686"/></svg>
<svg style="left:1591px;top:223.5px;" width="11" height="9"><path d="M1 4.5 L4 7.5 L10 1" stroke="#4fd38a" stroke-width="1.6" fill="none"/></svg>
<div style="left:1456px;top:513px;width:464px;height:1px;background:#4a4a4a;"></div>
<div style="left:1456px;top:514px;width:464px;height:5px;background:#363636;"></div>
<div style="left:1456px;top:519px;width:464px;height:20px;background:#2d2d2d;"></div>
<div style="left:1456px;top:519px;width:60px;height:20px;background:#3c3c3c;border-top:1px solid #4a4a4a;border-left:1px solid #474747;border-right:1px solid #474747;border-radius:2px 2px 0 0;"></div>
<span style="left:1462.00px;top:522.19px;font-size:11px;line-height:14px;color:#e4e4e4;letter-spacing:0.115px;">Attributes</span>
<span style="left:1522.00px;top:522.19px;font-size:11px;line-height:14px;color:#7e7e7e;letter-spacing:-0.603px;">Layers</span>
<span style="left:1565.00px;top:522.19px;font-size:11px;line-height:14px;color:#7e7e7e;letter-spacing:-0.116px;">Structure</span>
<div style="left:1456px;top:539px;width:464px;height:24px;background:#3c3c3c;border-top:1px solid #505050;border-bottom:1px solid #484848;"></div>
<svg style="left:1463px;top:546.5px;" width="14" height="10"><rect x="0" y="0" width="14" height="2" fill="#a8a8a8"/><rect x="0" y="4" width="14" height="2" fill="#a8a8a8"/><rect x="0" y="8" width="14" height="2" fill="#a8a8a8"/></svg>
<span style="left:1487.30px;top:544.49px;font-size:11px;line-height:14px;color:#d4d4d4;letter-spacing:0.228px;">Mode</span>
<span style="left:1530.00px;top:544.49px;font-size:11px;line-height:14px;color:#d4d4d4;letter-spacing:-0.218px;">Edit</span>
<span style="left:1563.00px;top:544.49px;font-size:11px;line-height:14px;color:#d4d4d4;letter-spacing:-0.277px;">User Data</span>
<svg style="left:1759px;top:543px;" width="160" height="17"><g fill="none" stroke="#a0a0a0" stroke-width="1.5">
<path d="M2.5 8.5 H18 M8.5 2.5 L2.5 8.5 L8.5 14.5"/>
<path d="M22 8.5 H37 M31 2.5 L37 8.5 L31 14.5" stroke="#505050"/>
<path d="M49.5 16 V2.5 M43.5 8.5 L49.5 2.5 L55.5 8.5"/>
<g stroke="#8e8e8e" stroke-width="1.3"><circle cx="68" cy="5.5" r="3.4"/><path d="M70.5 8.3 L75 14" stroke-width="2"/>
<path d="M82 2 H95.5 L90.5 8 V14.5 L87.5 13 V8Z"/>
<path d="M104 8 H115 V15.5 H104Z M106.5 8 V5 A3 3 0 0 1 112.5 5 V8"/><circle cx="109.5" cy="11.8" r="1" fill="#8e8e8e"/>
<circle cx="129.5" cy="9" r="6.8"/><circle cx="129.5" cy="9" r="2.6"/>
<path d="M144 2 H155.5 V15.5 H144Z"/><path d="M149.8 5.5 V12 M146.5 8.8 H153" stroke-width="1.8"/></g></g></svg>
<div style="left:0px;top:1049px;width:1920px;height:31px;background:linear-gradient(90deg,#1f3841 0%,#203b45 30%,#1f3b48 57%,#1d3450 67%,#1c2d4c 78%,#1b2846 100%);border-top:1px solid #35464e;"></div>
<svg style="left:9.5px;top:1056.5px;" width="17" height="17"><path d="M0 2.3 L7 1.3 V8 H0Z M8 1.15 L17 0 V8 H8Z M0 9 H7 V15.7 L0 14.7Z M8 9 H17 V17 L8 15.85Z" fill="#fff"/></svg>
<svg style="left:45px;top:1056px;" width="18" height="18"><circle cx="11" cy="6.6" r="5.4" stroke="#fff" stroke-width="1.4" fill="none"/><path d="M7.2 10.6 L1 16.8" stroke="#fff" stroke-width="1.5"/></svg>
<svg style="left:81px;top:1057px;" width="18" height="16"><g stroke="#fff" stroke-width="1.2" fill="none"><path d="M1 4 V1 H11 V4 M1 12 V15 H11 V12"/><rect x="1" y="5.5" width="10" height="5"/><path d="M15 0 V16"/><rect x="14" y="4" width="2" height="3" fill="#fff"/></g></svg>
<svg style="left:120px;top:1056px;" width="18" height="17"><path d="M1 2.5 H7 L9 4.5 H17 V14.5 H1Z" fill="#f5c84a"/><path d="M1 6 H17 V14.5 H1Z" fill="#fbdc78"/><rect x="4.5" y="9" width="9" height="5.5" fill="#4aa0d8"/><rect x="6.5" y="11.5" width="5" height="3" fill="#e8e8e8"/></svg>
<div style="left:115px;top:1078px;width:28px;height:2px;background:#8ab4dc;"></div>
<svg style="left:157px;top:1056px;" width="18" height="18"><circle cx="9" cy="9" r="7.4" fill="none" stroke="#c8325a" stroke-width="1.6"/><ellipse cx="9" cy="9" rx="3.4" ry="5.6" fill="none" stroke="#e0406a" stroke-width="1.6"/></svg>
<div style="left:152px;top:1078px;width:28px;height:2px;background:#8ab4dc;"></div>
<svg style="left:194px;top:1055px;" width="18" height="18"><circle cx="9" cy="9" r="8.6" fill="#5b6cf0"/><path d="M4.6 6.2 Q9 4.4 13.4 6.2 Q15 9.5 14.6 12.2 Q13 13.4 11.8 13.4 L11.2 12.4 Q9 13 6.8 12.4 L6.2 13.4 Q5 13.4 3.4 12.2 Q3 9.5 4.6 6.2Z" fill="#fff"/><ellipse cx="7.2" cy="9.8" rx="1.1" ry="1.3" fill="#5b6cf0"/><ellipse cx="10.8" cy="9.8" rx="1.1" ry="1.3" fill="#5b6cf0"/></svg>
<div style="left:189px;top:1078px;width:28px;height:2px;background:#8ab4dc;"></div>
<div style="left:222px;top:1049px;width:36px;height:31px;background:rgba(255,255,255,0.16);"></div>
<svg style="left:232px;top:1057px;" width="16" height="16"><circle cx="8" cy="8" r="7.4" fill="url(#c4dg)"/><path d="M2 11 A7.4 7.4 0 0 1 12 1.8 A8.4 8.4 0 0 0 2 11Z" fill="#e6ecfb" opacity="0.9"/><circle cx="9" cy="9" r="3" fill="#0b1030"/><circle cx="8.2" cy="8.2" r="1.1" fill="#7f95e0"/></svg>
<div style="left:222px;top:1078px;width:36px;height:2px;background:#9cc4ea;"></div>
<svg style="left:1737px;top:1060px;" width="14" height="10"><path d="M1 8 L7 2 L13 8" stroke="#fff" stroke-width="1.3" fill="none"/></svg>
<svg style="left:1760px;top:1057px;" width="16" height="17"><rect x="1" y="1" width="13.5" height="11" fill="none" stroke="#fff" stroke-width="1.2"/><circle cx="7.8" cy="6.5" r="2.6" fill="none" stroke="#fff" stroke-width="1.6"/><path d="M7.8 2.2 V10.8 M3.5 6.5 H12" stroke="#fff" stroke-width="1.4"/><path d="M7.8 12 V14.5 M4.5 15 H11" stroke="#fff" stroke-width="1.2"/></svg>
<svg style="left:1783px;top:1057px;" width="18" height="17"><g stroke="#fff" stroke-width="1.2" fill="none"><rect x="4.5" y="3" width="12" height="8.5"/><path d="M10.5 11.5 V14.5 M7 15 H14"/><rect x="1" y="1.5" width="4.5" height="3.5" fill="#1c2d4a"/><path d="M3.2 5 V13"/></g></svg>
<svg style="left:1807px;top:1056px;" width="18" height="18"><g stroke="#fff" stroke-width="1.2" fill="none"><path d="M1.5 7 H4.5 L8 3.5 V14.5 L4.5 11 H1.5Z"/><path d="M10.5 6.5 A3.5 3.5 0 0 1 10.5 11.5 M12.5 4.5 A6.3 6.3 0 0 1 12.5 13.5 M14.6 2.6 A9 9 0 0 1 14.6 15.4"/></g></svg>
<span style="left:1833.50px;top:1057.14px;font-size:12px;line-height:16px;color:#ffffff;letter-spacing:-0.632px;">22:26</span>
<svg style="left:1878px;top:1056px;" width="19" height="19"><path d="M1.5 1.5 H16.5 V12.5 H11.5 L9 15.5 L6.5 12.5 H1.5Z" stroke="#fff" stroke-width="1.2" fill="none"/></svg>
<div style="left:1914px;top:1049px;width:1px;height:31px;background:#7a8aa0;"></div>
</body></html>
